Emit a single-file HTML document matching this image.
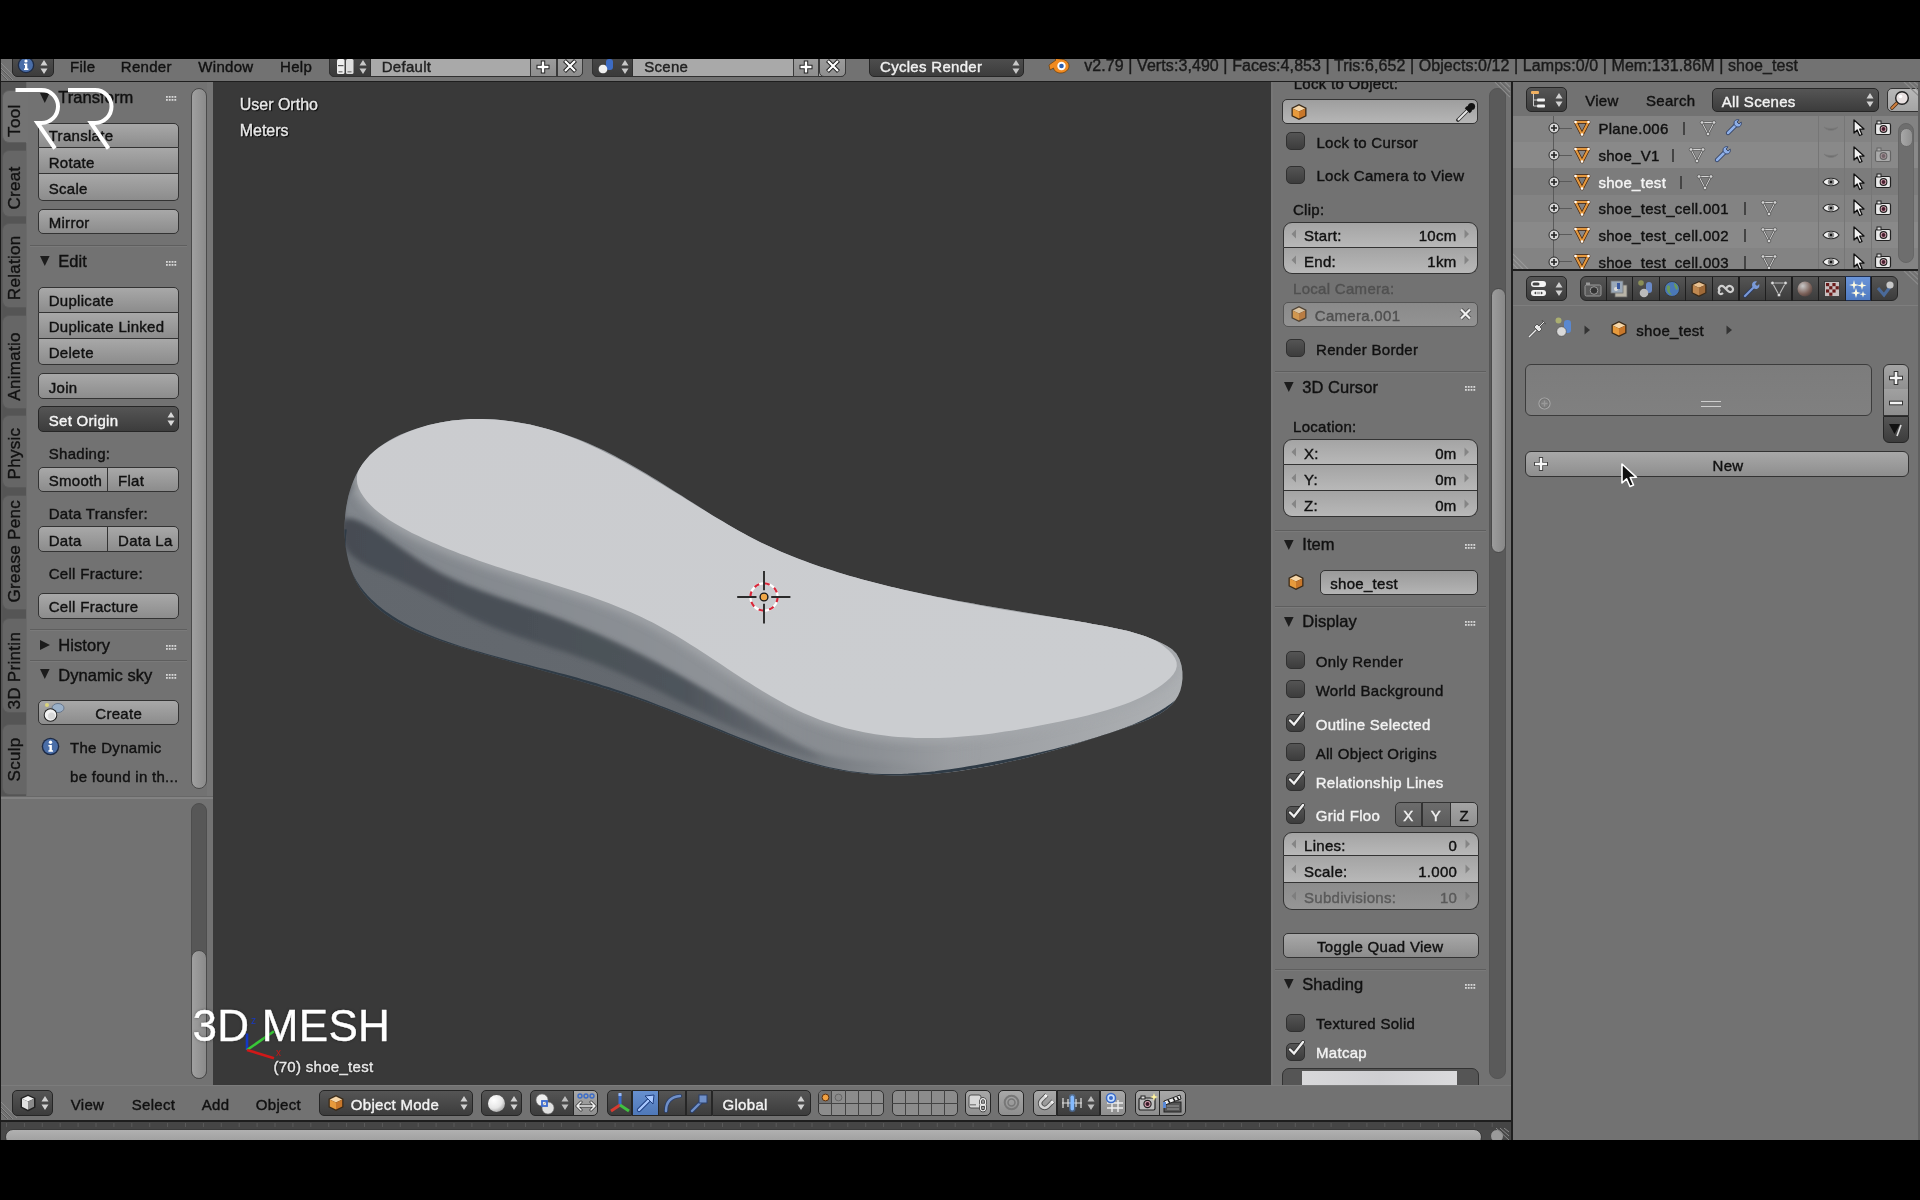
<!DOCTYPE html><html><head><meta charset="utf-8"><style>
html,body{margin:0;padding:0;background:#000;width:1920px;height:1200px;overflow:hidden}
body{position:relative;font-family:"Liberation Sans",sans-serif}
.a{position:absolute;box-sizing:border-box}
.t{position:absolute;white-space:nowrap;font-family:"Liberation Sans",sans-serif;-webkit-text-stroke:0.4px currentColor;letter-spacing:0.3px}
.btn{border:1px solid #333;border-radius:5px;background:linear-gradient(#a8a8a8,#8c8c8c)}
.btnf{border:1px solid #333;background:linear-gradient(#a8a8a8,#8c8c8c)}
.num{border:1px solid #333;background:linear-gradient(#a4a4a4,#b8b8b8)}
.chk{width:19px;height:19px;border:1px solid #303030;border-radius:5px;background:linear-gradient(#545454,#3c3c3c)}
.menu{border:1px solid #262626;border-radius:5px;background:linear-gradient(#555,#3c3c3c)}
.tf{border:1px solid #333;border-radius:5px;background:linear-gradient(#9a9a9a,#b4b4b4)}
.sep{background:#5c5c5c}
</style></head><body><div id="root" style="position:absolute;left:0;top:0;width:1920px;height:1200px;will-change:transform"><div class="a " style="left:0px;top:59px;width:1920px;height:22px;background:#727272"></div>
<div class="a " style="left:0px;top:80.5px;width:1920px;height:1.5px;background:#1e1e1e"></div>
<div class="a " style="left:0px;top:59px;width:1px;height:1081px;background:#1a1a1a"></div>
<div class="a " style="left:213px;top:82px;width:1058px;height:1003px;background:#393939"></div>
<div class="a " style="left:1px;top:82px;width:25px;height:715px;background:#555555"></div>
<div class="a " style="left:26px;top:82px;width:187px;height:715px;background:#727272"></div>
<div class="a " style="left:207px;top:82px;width:6px;height:1003px;background:#767676"></div>
<div class="a " style="left:1px;top:797px;width:212px;height:288px;background:#727272"></div>
<div class="a " style="left:1px;top:796px;width:212px;height:1px;background:#686868"></div>
<div class="a " style="left:1px;top:797px;width:212px;height:1.5px;background:#828282"></div>
<div class="a " style="left:1271px;top:82px;width:240px;height:1003px;background:#727272"></div>
<div class="a " style="left:1271px;top:82px;width:2px;height:1003px;background:#767676"></div>
<div class="a " style="left:1px;top:1085px;width:1510px;height:35px;background:#727272"></div>
<div class="a " style="left:1px;top:1084.5px;width:1510px;height:1px;background:#7c7c7c"></div>
<div class="a " style="left:1px;top:1120px;width:1510px;height:2px;background:#1e1e1e"></div>
<div class="a " style="left:1px;top:1122px;width:1510px;height:18px;background:#484848"></div>
<div class="a " style="left:1511px;top:81px;width:2px;height:1059px;background:#1e1e1e"></div>
<div class="a " style="left:1513px;top:82px;width:407px;height:34.5px;background:#727272"></div>
<div class="a " style="left:1513px;top:116.5px;width:407px;height:152.5px;background:#858585"></div>
<div class="a " style="left:1513px;top:269px;width:407px;height:2px;background:#1e1e1e"></div>
<div class="a " style="left:1513px;top:271px;width:407px;height:34px;background:#727272"></div>
<div class="a " style="left:1513px;top:305px;width:407px;height:835px;background:#727272"></div>
<div class="a " style="left:1513px;top:304.5px;width:407px;height:1.5px;background:#7e7e7e"></div>
<svg class="a" style="left:1px;top:59px;" width="14" height="22" viewBox="0 0 14 22"><path d="M0 9 L12 21 M0 14 L7 21 M0 4 L16 20" stroke="#8a8a8a" stroke-width="1"/><path d="M0 10 L11 21 M0 15 L6 21" stroke="#555" stroke-width="0.8"/></svg>
<div class="a menu" style="left:12px;top:50px;width:41.5px;height:26.5px;border-radius:0 0 5px 5px"></div>
<svg class="a" style="left:17px;top:56px;" width="18" height="18" viewBox="0 0 18 18"><g transform="scale(1.000)"><circle cx="9" cy="9" r="8.3" fill="#1d2a44"/><circle cx="9" cy="9" r="7" fill="#4a6ea8"/><circle cx="9" cy="5" r="1.6" fill="#fff"/><path d="M7 7.5 L10.3 7.5 L10.3 12.6 L11.4 12.6 L11.4 14 L7 14 L7 12.6 L8 12.6 L8 8.9 L7 8.9Z" fill="#fff"/></g></svg>
<svg class="a" style="left:40px;top:59px;" width="9" height="16" viewBox="0 0 9 16"><path d="M4 1 L7.5 6.5 L0.5 6.5Z M0.5 9.5 L7.5 9.5 L4 15Z" fill="#d0d0d0"/></svg>
<div class="t" style="left:70px;top:58.80px;font-size:15px;line-height:15px;color:#111;">File</div>
<div class="t" style="left:120.8px;top:58.80px;font-size:15px;line-height:15px;color:#111;">Render</div>
<div class="t" style="left:198.3px;top:58.80px;font-size:15px;line-height:15px;color:#111;">Window</div>
<div class="t" style="left:280px;top:58.80px;font-size:15px;line-height:15px;color:#111;">Help</div>
<div class="a " style="left:329.4px;top:50px;width:254px;height:26.6px;border-radius:0 0 5px 5px;overflow:hidden;background:#a9a9a9;border:1px solid #303030"></div>
<div class="a " style="left:329.4px;top:50px;width:41.5px;height:26.6px;border-radius:0 0 0 5px;background:linear-gradient(#4a4a4a,#3a3a3a);border:1px solid #303030"></div>
<div class="a " style="left:530px;top:50px;width:26.7px;height:26.6px;background:linear-gradient(#a2a2a2,#8e8e8e);border:1px solid #3a3a3a"></div>
<div class="a " style="left:556.7px;top:50px;width:26.6px;height:26.6px;border-radius:0 0 5px 0;background:linear-gradient(#a2a2a2,#8e8e8e);border:1px solid #3a3a3a"></div>
<svg class="a" style="left:336px;top:59px;" width="20" height="17" viewBox="0 0 20 17"><rect x="1" y="0" width="7.5" height="15" rx="1.5" fill="#eee"/><rect x="10" y="0" width="7.5" height="15" rx="1.5" fill="#ddd"/><rect x="2" y="6" width="5.5" height="1.2" fill="#555"/><rect x="2.5" y="12" width="4" height="1.5" fill="#888"/><rect x="11.5" y="12" width="4" height="1.5" fill="#888"/></svg>
<svg class="a" style="left:359px;top:59px;" width="9" height="16" viewBox="0 0 9 16"><path d="M4 1 L7.5 6.5 L0.5 6.5Z M0.5 9.5 L7.5 9.5 L4 15Z" fill="#c8c8c8"/></svg>
<div class="t" style="left:381.7px;top:58.60px;font-size:15px;line-height:15px;color:#222;">Default</div>
<svg class="a" style="left:535px;top:59px;" width="16" height="16" viewBox="0 0 16 16"><path d="M8 1.5 L8 14.5 M1.5 8 L14.5 8" stroke="#222" stroke-width="4.4"/><path d="M8 2.5 L8 13.5 M2.5 8 L13.5 8" stroke="#fff" stroke-width="2.4"/></svg>
<svg class="a" style="left:562px;top:59px;" width="16" height="14" viewBox="0 0 16 14"><path d="M2.5 1.5 L13.5 12.5 M13.5 1.5 L2.5 12.5" stroke="#222" stroke-width="4.2"/><path d="M3 2 L13 12 M13 2 L3 12" stroke="#fff" stroke-width="2.2"/></svg>
<div class="a " style="left:591.7px;top:50px;width:254.1px;height:26.6px;border-radius:0 0 5px 5px;overflow:hidden;background:#a9a9a9;border:1px solid #303030"></div>
<div class="a " style="left:591.7px;top:50px;width:41.6px;height:26.6px;border-radius:0 0 0 5px;background:linear-gradient(#4a4a4a,#3a3a3a);border:1px solid #303030"></div>
<div class="a " style="left:793.3px;top:50px;width:25.9px;height:26.6px;background:linear-gradient(#a2a2a2,#8e8e8e);border:1px solid #3a3a3a"></div>
<div class="a " style="left:819.2px;top:50px;width:26.6px;height:26.6px;border-radius:0 0 5px 5px;background:linear-gradient(#a2a2a2,#8e8e8e);border:1px solid #3a3a3a"></div>
<svg class="a" style="left:597px;top:57px;" width="22" height="18" viewBox="0 0 22 18"><circle cx="6" cy="12" r="4.6" fill="#eaeaea" stroke="#333" stroke-width="0.8"/><rect x="9" y="2" width="7" height="11" rx="3" fill="#3d6cc4"/><circle cx="6" cy="12" r="4.3" fill="#f0f0f0"/></svg>
<svg class="a" style="left:621px;top:59px;" width="9" height="16" viewBox="0 0 9 16"><path d="M4 1 L7.5 6.5 L0.5 6.5Z M0.5 9.5 L7.5 9.5 L4 15Z" fill="#c8c8c8"/></svg>
<div class="t" style="left:644.2px;top:58.60px;font-size:15px;line-height:15px;color:#222;">Scene</div>
<svg class="a" style="left:798px;top:59px;" width="16" height="16" viewBox="0 0 16 16"><path d="M8 1.5 L8 14.5 M1.5 8 L14.5 8" stroke="#222" stroke-width="4.4"/><path d="M8 2.5 L8 13.5 M2.5 8 L13.5 8" stroke="#fff" stroke-width="2.4"/></svg>
<svg class="a" style="left:825px;top:59px;" width="16" height="14" viewBox="0 0 16 14"><path d="M2.5 1.5 L13.5 12.5 M13.5 1.5 L2.5 12.5" stroke="#222" stroke-width="4.2"/><path d="M3 2 L13 12 M13 2 L3 12" stroke="#fff" stroke-width="2.2"/></svg>
<div class="a menu" style="left:869.2px;top:50px;width:155px;height:26.6px;border-radius:0 0 5px 5px"></div>
<div class="t" style="left:880px;top:58.80px;font-size:15px;line-height:15px;color:#f0f0f0;">Cycles Render</div>
<svg class="a" style="left:1012px;top:59px;" width="9" height="16" viewBox="0 0 9 16"><path d="M4 1 L7.5 6.5 L0.5 6.5Z M0.5 9.5 L7.5 9.5 L4 15Z" fill="#c8c8c8"/></svg>
<svg class="a" style="left:1048px;top:56px;" width="23" height="18" viewBox="0 0 23 18"><path d="M1 9 L8 4 L6 2 L12 3 C17 3 21 6 21 10 C21 14 17 17 13 17 C9 17 6 15 5.5 12 L2 14 Z" fill="#f08a20" stroke="#5a3000" stroke-width="0.6"/><circle cx="13.5" cy="10" r="4.2" fill="#fff"/><circle cx="13.5" cy="10" r="2.3" fill="#2c5fb0"/></svg>
<div class="t" style="left:1084.2px;top:58.06px;font-size:16px;line-height:16px;color:#1a1a1a;letter-spacing:0.08px">v2.79 | Verts:3,490 | Faces:4,853 | Tris:6,652 | Objects:0/12 | Lamps:0/0 | Mem:131.86M | shoe_test</div>
<div class="a " style="left:1.5px;top:90.1px;width:26px;height:53.20000000000002px;background:#737373;border-radius:7px 0 0 7px;border:1px solid #5e5e5e;border-right:none"></div>
<svg class="a" style="left:1px;top:90.1px;" width="26" height="53.20000000000002" viewBox="0 0 26 53.20000000000002"><text transform="translate(19.4,46.9) rotate(-90)" font-family="Liberation Sans" font-size="17" letter-spacing="0.3" fill="#111" stroke="#111" stroke-width="0.35">Tool</text></svg>
<div class="a " style="left:1.5px;top:150px;width:24px;height:67px;background:#666666;border-radius:7px 0 0 7px;border:1px solid #5a5a5a;border-right:none"></div>
<svg class="a" style="left:1px;top:150px;" width="26" height="67" viewBox="0 0 26 67"><text transform="translate(19.4,59.5) rotate(-90)" font-family="Liberation Sans" font-size="17" letter-spacing="0.3" fill="#111" stroke="#111" stroke-width="0.35">Creat</text></svg>
<div class="a " style="left:1.5px;top:223.3px;width:24px;height:85.0px;background:#666666;border-radius:7px 0 0 7px;border:1px solid #5a5a5a;border-right:none"></div>
<svg class="a" style="left:1px;top:223.3px;" width="26" height="85.0" viewBox="0 0 26 85.0"><text transform="translate(19.4,77.2) rotate(-90)" font-family="Liberation Sans" font-size="17" letter-spacing="0.3" fill="#111" stroke="#111" stroke-width="0.35">Relation</text></svg>
<div class="a " style="left:1.5px;top:314.8px;width:24px;height:94.19999999999999px;background:#666666;border-radius:7px 0 0 7px;border:1px solid #5a5a5a;border-right:none"></div>
<svg class="a" style="left:1px;top:314.8px;" width="26" height="94.19999999999999" viewBox="0 0 26 94.19999999999999"><text transform="translate(19.4,85.7) rotate(-90)" font-family="Liberation Sans" font-size="17" letter-spacing="0.3" fill="#111" stroke="#111" stroke-width="0.35">Animatio</text></svg>
<div class="a " style="left:1.5px;top:415px;width:24px;height:73px;background:#666666;border-radius:7px 0 0 7px;border:1px solid #5a5a5a;border-right:none"></div>
<svg class="a" style="left:1px;top:415px;" width="26" height="73" viewBox="0 0 26 73"><text transform="translate(19.4,64.5) rotate(-90)" font-family="Liberation Sans" font-size="17" letter-spacing="0.3" fill="#111" stroke="#111" stroke-width="0.35">Physic</text></svg>
<div class="a " style="left:1.5px;top:495px;width:24px;height:115px;background:#666666;border-radius:7px 0 0 7px;border:1px solid #5a5a5a;border-right:none"></div>
<svg class="a" style="left:1px;top:495px;" width="26" height="115" viewBox="0 0 26 115"><text transform="translate(19.4,107.5) rotate(-90)" font-family="Liberation Sans" font-size="17" letter-spacing="0.3" fill="#111" stroke="#111" stroke-width="0.35">Grease Penc</text></svg>
<div class="a " style="left:1.5px;top:618px;width:24px;height:95px;background:#666666;border-radius:7px 0 0 7px;border:1px solid #5a5a5a;border-right:none"></div>
<svg class="a" style="left:1px;top:618px;" width="26" height="95" viewBox="0 0 26 95"><text transform="translate(19.4,91.5) rotate(-90)" font-family="Liberation Sans" font-size="17" letter-spacing="0.3" fill="#111" stroke="#111" stroke-width="0.35">3D Printin</text></svg>
<div class="a " style="left:1.5px;top:724px;width:24px;height:71px;background:#666666;border-radius:7px 0 0 7px;border:1px solid #5a5a5a;border-right:none"></div>
<svg class="a" style="left:1px;top:724px;" width="26" height="71" viewBox="0 0 26 71"><text transform="translate(19.4,57.5) rotate(-90)" font-family="Liberation Sans" font-size="17" letter-spacing="0.3" fill="#111" stroke="#111" stroke-width="0.35">Sculp</text></svg>
<div class="a " style="left:25.5px;top:82px;width:1.5px;height:715px;background:#6a6a6a"></div>
<div class="a " style="left:25.5px;top:90.1px;width:2px;height:53.2px;background:#737373"></div>
<div class="a " style="left:190.7px;top:88px;width:16px;height:701.3px;border-radius:8px;border:1px solid #4a4a4a;background:linear-gradient(90deg,#a0a0a0,#8a8a8a)"></div>
<svg class="a" style="left:40.2px;top:92.8px;" width="10" height="10" viewBox="0 0 10 10"><path d="M0 0 L9.6 0 L4.8 10Z" fill="#1c1c1c"/></svg>
<div class="t" style="left:58.3px;top:88.73px;font-size:16.5px;line-height:16.5px;color:#111;letter-spacing:0.05px">Transform</div>
<svg class="a" style="left:166px;top:96.4px;" width="11" height="5" viewBox="0 0 11 5"><rect x="0.0" y="0" width="1.8" height="1.8" fill="#d8d8d8"/><rect x="2.8" y="0" width="1.8" height="1.8" fill="#d8d8d8"/><rect x="5.6" y="0" width="1.8" height="1.8" fill="#d8d8d8"/><rect x="8.399999999999999" y="0" width="1.8" height="1.8" fill="#d8d8d8"/><rect x="0.0" y="3" width="1.8" height="1.8" fill="#d8d8d8"/><rect x="2.8" y="3" width="1.8" height="1.8" fill="#d8d8d8"/><rect x="5.6" y="3" width="1.8" height="1.8" fill="#d8d8d8"/><rect x="8.399999999999999" y="3" width="1.8" height="1.8" fill="#d8d8d8"/></svg>
<div class="a btn" style="left:38px;top:122.7px;width:141px;height:25.299999999999997px;border-radius:5px 5px 0 0;"></div>
<div class="t" style="left:48.7px;top:128.00px;font-size:15px;line-height:15px;color:#111;">Translate</div>
<div class="a btn" style="left:38px;top:148px;width:141px;height:26.400000000000006px;border-radius:0;border-top:none;"></div>
<div class="t" style="left:48.7px;top:154.60px;font-size:15px;line-height:15px;color:#111;">Rotate</div>
<div class="a btn" style="left:38px;top:174.4px;width:141px;height:26.599999999999994px;border-radius:0 0 5px 5px;border-top:none;"></div>
<div class="t" style="left:48.7px;top:181.30px;font-size:15px;line-height:15px;color:#111;">Scale</div>
<div class="a btn" style="left:38px;top:209.3px;width:141px;height:24.69999999999999px;border-radius:5px;"></div>
<div class="t" style="left:48.7px;top:214.60px;font-size:15px;line-height:15px;color:#111;">Mirror</div>
<div class="a " style="left:30px;top:245.1px;width:157px;height:1px;background:#5e5e5e"></div>
<div class="a " style="left:30px;top:246.1px;width:157px;height:1px;background:#7a7a7a"></div>
<svg class="a" style="left:40.2px;top:255.5px;" width="10" height="10" viewBox="0 0 10 10"><path d="M0 0 L9.6 0 L4.8 10Z" fill="#1c1c1c"/></svg>
<div class="t" style="left:58.3px;top:253.03px;font-size:16.5px;line-height:16.5px;color:#111;letter-spacing:0.05px">Edit</div>
<svg class="a" style="left:166px;top:260.7px;" width="11" height="5" viewBox="0 0 11 5"><rect x="0.0" y="0" width="1.8" height="1.8" fill="#d8d8d8"/><rect x="2.8" y="0" width="1.8" height="1.8" fill="#d8d8d8"/><rect x="5.6" y="0" width="1.8" height="1.8" fill="#d8d8d8"/><rect x="8.399999999999999" y="0" width="1.8" height="1.8" fill="#d8d8d8"/><rect x="0.0" y="3" width="1.8" height="1.8" fill="#d8d8d8"/><rect x="2.8" y="3" width="1.8" height="1.8" fill="#d8d8d8"/><rect x="5.6" y="3" width="1.8" height="1.8" fill="#d8d8d8"/><rect x="8.399999999999999" y="3" width="1.8" height="1.8" fill="#d8d8d8"/></svg>
<div class="a btn" style="left:38px;top:287px;width:141px;height:26px;border-radius:5px 5px 0 0;"></div>
<div class="t" style="left:48.7px;top:292.60px;font-size:15px;line-height:15px;color:#111;">Duplicate</div>
<div class="a btn" style="left:38px;top:313px;width:141px;height:26px;border-radius:0;border-top:none;"></div>
<div class="t" style="left:48.7px;top:318.60px;font-size:15px;line-height:15px;color:#111;">Duplicate Linked</div>
<div class="a btn" style="left:38px;top:339px;width:141px;height:26.30000000000001px;border-radius:0 0 5px 5px;border-top:none;"></div>
<div class="t" style="left:48.7px;top:345.30px;font-size:15px;line-height:15px;color:#111;">Delete</div>
<div class="a btn" style="left:38px;top:373.3px;width:141px;height:25.399999999999977px;border-radius:5px;"></div>
<div class="t" style="left:48.7px;top:380.00px;font-size:15px;line-height:15px;color:#111;">Join</div>
<div class="a menu" style="left:38px;top:406px;width:141px;height:26px;"></div>
<div class="t" style="left:48.7px;top:413.30px;font-size:15px;line-height:15px;color:#f4f4f4;">Set Origin</div>
<svg class="a" style="left:166.5px;top:410.5px;" width="8" height="16" viewBox="0 0 8 16"><path d="M4 1 L7.5 6.5 L0.5 6.5Z M0.5 9.5 L7.5 9.5 L4 15Z" fill="#d8d8d8"/></svg>
<div class="t" style="left:48.7px;top:446.00px;font-size:15px;line-height:15px;color:#111;">Shading:</div>
<div class="a btn" style="left:38px;top:466.7px;width:70px;height:25.3px;border-radius:5px 0 0 5px"></div>
<div class="a btn" style="left:107.3px;top:466.7px;width:71.7px;height:25.3px;border-radius:0 5px 5px 0"></div>
<div class="t" style="left:48.7px;top:472.60px;font-size:15px;line-height:15px;color:#111;">Smooth</div>
<div class="t" style="left:118px;top:472.60px;font-size:15px;line-height:15px;color:#111;">Flat</div>
<div class="t" style="left:48.7px;top:506.00px;font-size:15px;line-height:15px;color:#111;">Data Transfer:</div>
<div class="a btn" style="left:38px;top:526.4px;width:70px;height:25.6px;border-radius:5px 0 0 5px"></div>
<div class="a btn" style="left:107.3px;top:526.4px;width:71.7px;height:25.6px;border-radius:0 5px 5px 0"></div>
<div class="t" style="left:48.7px;top:532.60px;font-size:15px;line-height:15px;color:#111;">Data</div>
<div class="t" style="left:118px;top:532.60px;font-size:15px;line-height:15px;color:#111;">Data La</div>
<div class="t" style="left:48.7px;top:566.00px;font-size:15px;line-height:15px;color:#111;">Cell Fracture:</div>
<div class="a btn" style="left:38px;top:593.3px;width:141px;height:25.40000000000009px;border-radius:5px;"></div>
<div class="t" style="left:48.7px;top:599.30px;font-size:15px;line-height:15px;color:#111;">Cell Fracture</div>
<div class="a " style="left:30px;top:629.1px;width:157px;height:1px;background:#5e5e5e"></div>
<div class="a " style="left:30px;top:630.1px;width:157px;height:1px;background:#7a7a7a"></div>
<svg class="a" style="left:39.5px;top:640px;" width="10" height="10" viewBox="0 0 10 10"><path d="M0 0 L10 5 L0 10Z" fill="#1c1c1c"/></svg>
<div class="t" style="left:58.3px;top:637.33px;font-size:16.5px;line-height:16.5px;color:#111;letter-spacing:0.05px">History</div>
<svg class="a" style="left:166px;top:645px;" width="11" height="5" viewBox="0 0 11 5"><rect x="0.0" y="0" width="1.8" height="1.8" fill="#d8d8d8"/><rect x="2.8" y="0" width="1.8" height="1.8" fill="#d8d8d8"/><rect x="5.6" y="0" width="1.8" height="1.8" fill="#d8d8d8"/><rect x="8.399999999999999" y="0" width="1.8" height="1.8" fill="#d8d8d8"/><rect x="0.0" y="3" width="1.8" height="1.8" fill="#d8d8d8"/><rect x="2.8" y="3" width="1.8" height="1.8" fill="#d8d8d8"/><rect x="5.6" y="3" width="1.8" height="1.8" fill="#d8d8d8"/><rect x="8.399999999999999" y="3" width="1.8" height="1.8" fill="#d8d8d8"/></svg>
<div class="a " style="left:30px;top:659.5px;width:157px;height:1px;background:#5e5e5e"></div>
<div class="a " style="left:30px;top:660.5px;width:157px;height:1px;background:#7a7a7a"></div>
<svg class="a" style="left:40.2px;top:669.0px;" width="10" height="10" viewBox="0 0 10 10"><path d="M0 0 L9.6 0 L4.8 10Z" fill="#1c1c1c"/></svg>
<div class="t" style="left:58.3px;top:666.73px;font-size:16.5px;line-height:16.5px;color:#111;letter-spacing:0.05px">Dynamic sky</div>
<svg class="a" style="left:166px;top:673.5px;" width="11" height="5" viewBox="0 0 11 5"><rect x="0.0" y="0" width="1.8" height="1.8" fill="#d8d8d8"/><rect x="2.8" y="0" width="1.8" height="1.8" fill="#d8d8d8"/><rect x="5.6" y="0" width="1.8" height="1.8" fill="#d8d8d8"/><rect x="8.399999999999999" y="0" width="1.8" height="1.8" fill="#d8d8d8"/><rect x="0.0" y="3" width="1.8" height="1.8" fill="#d8d8d8"/><rect x="2.8" y="3" width="1.8" height="1.8" fill="#d8d8d8"/><rect x="5.6" y="3" width="1.8" height="1.8" fill="#d8d8d8"/><rect x="8.399999999999999" y="3" width="1.8" height="1.8" fill="#d8d8d8"/></svg>
<div class="a btn" style="left:38px;top:699.6px;width:141px;height:25.7px;"></div>
<div class="t" style="left:95.3px;top:706.00px;font-size:15px;line-height:15px;color:#111;">Create</div>
<svg class="a" style="left:42px;top:701px;" width="24" height="22" viewBox="0 0 24 22"><ellipse cx="16" cy="7" rx="6" ry="4.5" fill="#9ab0c8" stroke="#5a6a80" stroke-width="0.8"/><circle cx="5" cy="4" r="2" fill="#e8e070" opacity="0.8"/><circle cx="8.5" cy="14" r="6.8" fill="#222"/><circle cx="8.5" cy="14" r="5.8" fill="#f2f2f2"/><circle cx="9.5" cy="15" r="3.5" fill="#d8d8d8"/></svg>
<svg class="a" style="left:41.3px;top:736.7px;" width="19" height="19" viewBox="0 0 19 19"><g transform="scale(1.056)"><circle cx="9" cy="9" r="8.3" fill="#1d2a44"/><circle cx="9" cy="9" r="7" fill="#4a6ea8"/><circle cx="9" cy="5" r="1.6" fill="#fff"/><path d="M7 7.5 L10.3 7.5 L10.3 12.6 L11.4 12.6 L11.4 14 L7 14 L7 12.6 L8 12.6 L8 8.9 L7 8.9Z" fill="#fff"/></g></svg>
<div class="t" style="left:70px;top:740.00px;font-size:15px;line-height:15px;color:#111;">The Dynamic</div>
<div class="t" style="left:70px;top:768.60px;font-size:15px;line-height:15px;color:#111;">be found in th...</div>
<div class="a " style="left:190.9px;top:803px;width:16px;height:276.4px;border-radius:8px;background:#575757;border:1px solid #4e4e4e"></div>
<div class="a " style="left:190.9px;top:950px;width:16px;height:129.4px;border-radius:8px;border:1px solid #4a4a4a;background:linear-gradient(90deg,#a0a0a0,#8a8a8a)"></div>
<svg class="a" style="left:213px;top:82px;" width="1058" height="1003" viewBox="0 0 1058 1003">
<defs>
<linearGradient id="gs" x1="0" y1="0" x2="0.3" y2="1"><stop offset="0" stop-color="#cbcccf"/><stop offset="1" stop-color="#cbcdd0"/></linearGradient>
<linearGradient id="gside" x1="340" y1="0" x2="1190" y2="0" gradientUnits="userSpaceOnUse"><stop offset="0" stop-color="#62676d"/><stop offset="0.4" stop-color="#64696f"/><stop offset="0.55" stop-color="#72777d"/><stop offset="0.72" stop-color="#9a9da1"/><stop offset="1" stop-color="#aeb1b4"/></linearGradient>
<linearGradient id="gband" x1="340" y1="0" x2="830" y2="0" gradientUnits="userSpaceOnUse"><stop offset="0" stop-color="#464c53"/><stop offset="0.7" stop-color="#4e545b"/><stop offset="1" stop-color="#5e636a" stop-opacity="0.3"/></linearGradient>
<linearGradient id="grim" x1="340" y1="0" x2="980" y2="0" gradientUnits="userSpaceOnUse"><stop offset="0" stop-color="#80858b"/><stop offset="0.6" stop-color="#8e9297"/><stop offset="1" stop-color="#9ea1a5" stop-opacity="0"/></linearGradient>
<filter id="bl" x="-5%" y="-5%" width="110%" height="110%"><feGaussianBlur stdDeviation="4"/></filter>
<filter id="bl2" x="-5%" y="-10%" width="110%" height="120%"><feGaussianBlur stdDeviation="2.5"/></filter>
<clipPath id="csil"><path d="M345.3,514.7 L346.0,508.6 L347.1,502.5 L348.3,496.5 L349.9,490.7 L351.8,484.9 L354.0,479.4 L356.5,474.0 L359.3,468.9 L362.5,464.0 L366.1,459.4 L370.0,455.1 L374.3,451.1 L378.9,447.3 L383.7,443.9 L388.8,440.7 L394.2,437.8 L399.7,435.1 L405.3,432.7 L411.1,430.4 L416.9,428.4 L422.8,426.7 L428.6,425.1 L434.6,423.7 L440.5,422.5 L446.4,421.4 L452.4,420.6 L458.4,419.9 L464.3,419.4 L470.3,419.1 L476.3,419.0 L482.3,419.0 L488.3,419.2 L494.3,419.5 L500.2,420.0 L506.2,420.7 L512.2,421.4 L518.1,422.4 L524.0,423.4 L529.9,424.6 L535.8,425.9 L541.7,427.4 L547.5,429.0 L553.4,430.7 L559.1,432.5 L564.9,434.4 L570.6,436.4 L576.3,438.6 L582.0,440.8 L587.6,443.1 L593.1,445.5 L598.6,448.0 L604.1,450.6 L609.5,453.3 L614.9,456.0 L620.2,458.9 L625.5,461.7 L630.8,464.7 L636.0,467.7 L641.2,470.7 L646.4,473.8 L651.6,476.9 L656.7,480.1 L661.8,483.2 L666.9,486.5 L672.0,489.7 L677.1,492.9 L682.2,496.1 L687.3,499.4 L692.3,502.6 L697.4,505.8 L702.5,509.0 L707.6,512.2 L712.7,515.4 L717.8,518.5 L723.0,521.6 L728.2,524.7 L733.4,527.7 L738.6,530.7 L743.8,533.6 L749.1,536.4 L754.5,539.2 L759.8,541.9 L765.2,544.5 L770.7,547.0 L776.2,549.5 L781.7,551.9 L787.3,554.2 L792.9,556.5 L798.5,558.7 L804.1,560.8 L809.8,562.9 L815.5,564.9 L821.2,566.9 L826.9,568.8 L832.7,570.6 L838.4,572.4 L844.2,574.2 L850.0,575.9 L855.8,577.5 L861.6,579.2 L867.4,580.7 L873.2,582.3 L879.0,583.8 L884.9,585.2 L890.7,586.7 L896.5,588.0 L902.4,589.4 L908.3,590.7 L914.1,592.0 L920.0,593.3 L925.9,594.5 L931.8,595.7 L937.7,596.9 L943.6,598.1 L949.5,599.2 L955.4,600.4 L961.3,601.5 L967.2,602.5 L973.2,603.6 L979.1,604.7 L985.0,605.7 L991.0,606.8 L996.9,607.8 L1002.9,608.8 L1008.8,609.8 L1014.8,610.8 L1020.7,611.8 L1026.7,612.8 L1032.6,613.8 L1038.6,614.8 L1044.6,615.8 L1050.6,616.7 L1056.5,617.7 L1062.5,618.7 L1068.5,619.8 L1074.5,620.8 L1080.4,621.8 L1086.4,622.8 L1092.4,623.9 L1098.4,625.0 L1104.3,626.1 L1110.3,627.2 L1116.2,628.4 L1122.1,629.7 L1128.0,631.1 L1133.8,632.7 L1139.6,634.4 L1145.2,636.3 L1150.8,638.4 L1156.3,640.7 L1161.7,643.2 L1167.0,646.0 L1172.0,649.3 L1176.3,653.5 L1179.4,658.9 L1181.4,665.2 L1182.4,672.0 L1182.5,678.8 L1181.7,685.1 L1180.3,690.7 L1178.1,695.8 L1175.3,700.3 L1172.0,704.4 L1168.1,708.0 L1163.8,711.3 L1159.1,714.2 L1154.0,716.8 L1148.7,719.2 L1143.2,721.5 L1137.5,723.5 L1131.8,725.6 L1126.0,727.5 L1120.1,729.5 L1114.3,731.5 L1108.4,733.4 L1102.6,735.3 L1096.7,737.2 L1090.8,739.1 L1084.9,741.0 L1079.0,742.8 L1073.1,744.7 L1067.2,746.4 L1061.3,748.2 L1055.3,749.9 L1049.4,751.6 L1043.4,753.2 L1037.5,754.8 L1031.5,756.4 L1025.5,757.9 L1019.6,759.4 L1013.6,760.8 L1007.6,762.1 L1001.7,763.5 L995.7,764.7 L989.7,765.9 L983.7,767.1 L977.7,768.1 L971.8,769.1 L965.8,770.1 L959.8,771.0 L953.8,771.8 L947.8,772.5 L941.9,773.1 L935.9,773.7 L929.9,774.2 L924.0,774.6 L918.0,774.9 L912.0,775.2 L906.1,775.3 L900.2,775.4 L894.2,775.4 L888.3,775.2 L882.4,775.0 L876.5,774.7 L870.6,774.3 L864.7,773.7 L858.8,773.1 L852.9,772.4 L847.0,771.5 L841.2,770.5 L835.4,769.5 L829.5,768.3 L823.7,767.0 L817.9,765.6 L812.1,764.1 L806.3,762.5 L800.6,760.8 L794.8,759.1 L789.0,757.2 L783.3,755.3 L777.6,753.4 L771.8,751.4 L766.1,749.3 L760.4,747.2 L754.7,745.0 L749.0,742.8 L743.3,740.6 L737.6,738.3 L732.0,736.0 L726.3,733.7 L720.6,731.4 L715.0,729.1 L709.3,726.8 L703.7,724.4 L698.0,722.1 L692.4,719.8 L686.8,717.5 L681.1,715.3 L675.5,713.0 L669.9,710.9 L664.3,708.7 L658.7,706.6 L653.1,704.5 L647.4,702.5 L641.8,700.5 L636.2,698.6 L630.6,696.7 L625.0,694.9 L619.4,693.0 L613.8,691.3 L608.1,689.5 L602.5,687.8 L596.9,686.1 L591.2,684.4 L585.6,682.7 L579.9,681.1 L574.2,679.4 L568.5,677.8 L562.8,676.2 L557.1,674.6 L551.4,673.0 L545.6,671.4 L539.9,669.8 L534.1,668.2 L528.3,666.6 L522.5,665.0 L516.7,663.4 L510.8,661.8 L505.0,660.1 L499.1,658.5 L493.2,656.8 L487.2,655.1 L481.2,653.4 L475.3,651.6 L469.2,649.8 L463.2,648.0 L457.1,646.1 L451.1,644.2 L445.0,642.2 L439.0,640.2 L433.1,638.0 L427.2,635.8 L421.4,633.5 L415.7,631.1 L410.1,628.5 L404.6,625.8 L399.3,623.0 L394.1,620.0 L389.2,616.8 L384.4,613.5 L379.8,610.0 L375.5,606.3 L371.4,602.4 L367.5,598.3 L364.0,594.0 L360.7,589.4 L357.7,584.6 L355.1,579.5 L352.8,574.3 L350.7,568.8 L349.0,563.2 L347.6,557.4 L346.4,551.5 L345.5,545.5 L345.0,539.4 L344.6,533.3 L344.6,527.1 L344.8,520.9 L345.3,514.7 Z"/></clipPath>
</defs>
<g transform="translate(-213,-82)">
<path d="M345.3,514.7 L346.0,508.6 L347.1,502.5 L348.3,496.5 L349.9,490.7 L351.8,484.9 L354.0,479.4 L356.5,474.0 L359.3,468.9 L362.5,464.0 L366.1,459.4 L370.0,455.1 L374.3,451.1 L378.9,447.3 L383.7,443.9 L388.8,440.7 L394.2,437.8 L399.7,435.1 L405.3,432.7 L411.1,430.4 L416.9,428.4 L422.8,426.7 L428.6,425.1 L434.6,423.7 L440.5,422.5 L446.4,421.4 L452.4,420.6 L458.4,419.9 L464.3,419.4 L470.3,419.1 L476.3,419.0 L482.3,419.0 L488.3,419.2 L494.3,419.5 L500.2,420.0 L506.2,420.7 L512.2,421.4 L518.1,422.4 L524.0,423.4 L529.9,424.6 L535.8,425.9 L541.7,427.4 L547.5,429.0 L553.4,430.7 L559.1,432.5 L564.9,434.4 L570.6,436.4 L576.3,438.6 L582.0,440.8 L587.6,443.1 L593.1,445.5 L598.6,448.0 L604.1,450.6 L609.5,453.3 L614.9,456.0 L620.2,458.9 L625.5,461.7 L630.8,464.7 L636.0,467.7 L641.2,470.7 L646.4,473.8 L651.6,476.9 L656.7,480.1 L661.8,483.2 L666.9,486.5 L672.0,489.7 L677.1,492.9 L682.2,496.1 L687.3,499.4 L692.3,502.6 L697.4,505.8 L702.5,509.0 L707.6,512.2 L712.7,515.4 L717.8,518.5 L723.0,521.6 L728.2,524.7 L733.4,527.7 L738.6,530.7 L743.8,533.6 L749.1,536.4 L754.5,539.2 L759.8,541.9 L765.2,544.5 L770.7,547.0 L776.2,549.5 L781.7,551.9 L787.3,554.2 L792.9,556.5 L798.5,558.7 L804.1,560.8 L809.8,562.9 L815.5,564.9 L821.2,566.9 L826.9,568.8 L832.7,570.6 L838.4,572.4 L844.2,574.2 L850.0,575.9 L855.8,577.5 L861.6,579.2 L867.4,580.7 L873.2,582.3 L879.0,583.8 L884.9,585.2 L890.7,586.7 L896.5,588.0 L902.4,589.4 L908.3,590.7 L914.1,592.0 L920.0,593.3 L925.9,594.5 L931.8,595.7 L937.7,596.9 L943.6,598.1 L949.5,599.2 L955.4,600.4 L961.3,601.5 L967.2,602.5 L973.2,603.6 L979.1,604.7 L985.0,605.7 L991.0,606.8 L996.9,607.8 L1002.9,608.8 L1008.8,609.8 L1014.8,610.8 L1020.7,611.8 L1026.7,612.8 L1032.6,613.8 L1038.6,614.8 L1044.6,615.8 L1050.6,616.7 L1056.5,617.7 L1062.5,618.7 L1068.5,619.8 L1074.5,620.8 L1080.4,621.8 L1086.4,622.8 L1092.4,623.9 L1098.4,625.0 L1104.3,626.1 L1110.3,627.2 L1116.2,628.4 L1122.1,629.7 L1128.0,631.1 L1133.8,632.7 L1139.6,634.4 L1145.2,636.3 L1150.8,638.4 L1156.3,640.7 L1161.7,643.2 L1167.0,646.0 L1172.0,649.3 L1176.3,653.5 L1179.4,658.9 L1181.4,665.2 L1182.4,672.0 L1182.5,678.8 L1181.7,685.1 L1180.3,690.7 L1178.1,695.8 L1175.3,700.3 L1172.0,704.4 L1168.1,708.0 L1163.8,711.3 L1159.1,714.2 L1154.0,716.8 L1148.7,719.2 L1143.2,721.5 L1137.5,723.5 L1131.8,725.6 L1126.0,727.5 L1120.1,729.5 L1114.3,731.5 L1108.4,733.4 L1102.6,735.3 L1096.7,737.2 L1090.8,739.1 L1084.9,741.0 L1079.0,742.8 L1073.1,744.7 L1067.2,746.4 L1061.3,748.2 L1055.3,749.9 L1049.4,751.6 L1043.4,753.2 L1037.5,754.8 L1031.5,756.4 L1025.5,757.9 L1019.6,759.4 L1013.6,760.8 L1007.6,762.1 L1001.7,763.5 L995.7,764.7 L989.7,765.9 L983.7,767.1 L977.7,768.1 L971.8,769.1 L965.8,770.1 L959.8,771.0 L953.8,771.8 L947.8,772.5 L941.9,773.1 L935.9,773.7 L929.9,774.2 L924.0,774.6 L918.0,774.9 L912.0,775.2 L906.1,775.3 L900.2,775.4 L894.2,775.4 L888.3,775.2 L882.4,775.0 L876.5,774.7 L870.6,774.3 L864.7,773.7 L858.8,773.1 L852.9,772.4 L847.0,771.5 L841.2,770.5 L835.4,769.5 L829.5,768.3 L823.7,767.0 L817.9,765.6 L812.1,764.1 L806.3,762.5 L800.6,760.8 L794.8,759.1 L789.0,757.2 L783.3,755.3 L777.6,753.4 L771.8,751.4 L766.1,749.3 L760.4,747.2 L754.7,745.0 L749.0,742.8 L743.3,740.6 L737.6,738.3 L732.0,736.0 L726.3,733.7 L720.6,731.4 L715.0,729.1 L709.3,726.8 L703.7,724.4 L698.0,722.1 L692.4,719.8 L686.8,717.5 L681.1,715.3 L675.5,713.0 L669.9,710.9 L664.3,708.7 L658.7,706.6 L653.1,704.5 L647.4,702.5 L641.8,700.5 L636.2,698.6 L630.6,696.7 L625.0,694.9 L619.4,693.0 L613.8,691.3 L608.1,689.5 L602.5,687.8 L596.9,686.1 L591.2,684.4 L585.6,682.7 L579.9,681.1 L574.2,679.4 L568.5,677.8 L562.8,676.2 L557.1,674.6 L551.4,673.0 L545.6,671.4 L539.9,669.8 L534.1,668.2 L528.3,666.6 L522.5,665.0 L516.7,663.4 L510.8,661.8 L505.0,660.1 L499.1,658.5 L493.2,656.8 L487.2,655.1 L481.2,653.4 L475.3,651.6 L469.2,649.8 L463.2,648.0 L457.1,646.1 L451.1,644.2 L445.0,642.2 L439.0,640.2 L433.1,638.0 L427.2,635.8 L421.4,633.5 L415.7,631.1 L410.1,628.5 L404.6,625.8 L399.3,623.0 L394.1,620.0 L389.2,616.8 L384.4,613.5 L379.8,610.0 L375.5,606.3 L371.4,602.4 L367.5,598.3 L364.0,594.0 L360.7,589.4 L357.7,584.6 L355.1,579.5 L352.8,574.3 L350.7,568.8 L349.0,563.2 L347.6,557.4 L346.4,551.5 L345.5,545.5 L345.0,539.4 L344.6,533.3 L344.6,527.1 L344.8,520.9 L345.3,514.7 Z" fill="url(#gside)"/>
<g clip-path="url(#csil)">
<path d="M350.1,491.6 L352.7,489.5 L355.6,488.5 L359.0,488.4 L362.7,489.2 L366.8,490.7 L371.1,492.9 L375.7,495.7 L380.5,499.0 L385.5,502.6 L390.7,506.7 L396.0,510.9 L401.5,515.4 L407.0,519.8 L412.5,524.3 L418.1,528.7 L423.6,532.8 L429.1,536.7 L434.5,540.3 L439.8,543.4 L445.0,546.1 L450.2,548.4 L455.2,550.4 L460.2,552.2 L465.2,553.8 L470.1,555.2 L475.1,556.5 L480.0,557.8 L485.0,559.2 L490.0,560.5 L495.0,561.9 L500.1,563.3 L505.2,564.7 L510.3,566.2 L515.5,567.7 L520.6,569.3 L525.8,570.9 L531.0,572.5 L536.2,574.1 L541.5,575.8 L546.7,577.5 L551.9,579.3 L557.2,581.1 L562.5,582.9 L567.7,584.8 L573.0,586.7 L578.3,588.6 L583.6,590.6 L588.8,592.6 L594.1,594.7 L599.4,596.8 L604.6,598.9 L609.9,601.1 L615.1,603.3 L620.3,605.6 L625.5,607.9 L630.7,610.2 L635.9,612.6 L641.1,615.1 L646.2,617.5 L651.3,620.1 L656.4,622.6 L661.5,625.2 L666.5,627.9 L671.5,630.6 L676.5,633.3 L681.4,636.1 L686.4,638.9 L691.3,641.7 L696.2,644.6 L701.0,647.4 L705.9,650.3 L710.7,653.2 L715.5,656.1 L720.3,659.1 L725.1,662.0 L729.9,664.9 L734.7,667.9 L739.5,670.8 L744.2,673.7 L749.0,676.6 L753.7,679.5 L758.5,682.4 L763.2,685.2 L768.0,688.0 L772.7,690.8 L777.5,693.6 L782.2,696.3 L787.0,699.0 L791.7,701.7 L796.5,704.3 L801.3,706.9 L806.1,709.4 L810.9,711.8 L815.7,714.2 L820.5,716.5 L825.4,718.8 L830.2,721.0 L835.1,723.2 L840.0,725.2 L844.9,727.2 L849.9,729.1 L854.9,730.8 L860.0,732.5 L865.3,733.9 L870.6,735.2 L876.1,736.3 L881.8,737.1 L887.7,737.7 L893.8,738.0 L900.2,738.0 L906.8,737.7 L913.5,737.2 L920.4,736.5 L927.3,735.7 L934.2,734.9 L940.9,734.2 L947.4,733.6 L953.5,733.3 L959.3,733.2 L964.6,733.5 L969.3,734.2 L973.4,735.5 L976.7,737.3 L979.3,739.9 L981.0,743.1 L981.7,746.9 L981.6,750.9 L980.6,754.7 L978.7,758.0 L975.9,760.7 L972.4,762.8 L968.2,764.5 L963.4,765.6 L958.1,766.3 L952.3,766.7 L946.2,766.8 L939.7,766.6 L933.1,766.2 L926.3,765.7 L919.4,765.0 L912.5,764.3 L905.8,763.6 L899.2,763.0 L892.8,762.5 L886.6,762.0 L880.6,761.6 L874.8,761.2 L869.1,760.8 L863.5,760.4 L858.1,759.9 L852.7,759.3 L847.4,758.6 L842.2,757.8 L837.0,756.9 L831.8,755.8 L826.6,754.5 L821.4,753.1 L816.3,751.5 L811.2,749.8 L806.1,747.9 L801.0,746.0 L795.9,743.9 L790.9,741.7 L785.8,739.4 L780.8,736.9 L775.8,734.4 L770.8,731.8 L765.8,729.2 L760.9,726.4 L755.9,723.6 L750.9,720.7 L746.0,717.8 L741.1,714.9 L736.2,711.8 L731.3,708.8 L726.4,705.7 L721.5,702.7 L716.6,699.6 L711.7,696.5 L706.9,693.4 L702.0,690.3 L697.2,687.2 L692.4,684.1 L687.5,681.1 L682.7,678.1 L677.9,675.2 L673.1,672.3 L668.3,669.4 L663.5,666.7 L658.7,663.9 L653.9,661.3 L649.1,658.7 L644.3,656.2 L639.5,653.8 L634.7,651.4 L629.9,649.1 L625.1,646.8 L620.3,644.6 L615.5,642.4 L610.6,640.3 L605.8,638.3 L600.9,636.3 L596.1,634.3 L591.2,632.3 L586.3,630.4 L581.4,628.5 L576.4,626.7 L571.5,624.9 L566.5,623.1 L561.5,621.3 L556.4,619.6 L551.4,617.9 L546.3,616.1 L541.2,614.4 L536.0,612.8 L530.8,611.1 L525.6,609.4 L520.3,607.7 L515.0,606.0 L509.7,604.4 L504.3,602.7 L498.9,601.0 L493.5,599.3 L488.0,597.6 L482.4,595.8 L476.8,594.1 L471.2,592.3 L465.5,590.5 L459.7,588.7 L453.9,586.9 L448.0,585.0 L442.1,583.1 L436.2,581.1 L430.1,579.1 L424.0,577.1 L417.9,575.0 L411.8,572.9 L405.8,570.6 L399.9,568.3 L394.0,565.9 L388.4,563.3 L382.9,560.6 L377.6,557.8 L372.6,554.8 L367.9,551.6 L363.6,548.3 L359.5,544.7 L355.9,541.0 L352.7,537.0 L350.0,532.8 L347.8,528.4 L346.1,523.7 L345.0,518.7 L344.5,513.5 L344.6,508.3 L345.2,503.2 L346.4,498.6 L348.0,494.6 L350.1,491.6 Z" fill="url(#grim)" filter="url(#bl2)"/>
<path d="M343.9,519.7 L346.0,518.6 L348.6,518.3 L351.5,518.5 L354.8,519.4 L358.4,520.7 L362.2,522.5 L366.3,524.7 L370.5,527.1 L374.7,529.8 L379.1,532.7 L383.4,535.6 L387.6,538.5 L391.8,541.4 L395.8,544.2 L399.7,547.0 L403.5,549.7 L407.3,552.3 L411.0,554.8 L414.6,557.3 L418.2,559.7 L421.9,562.0 L425.5,564.3 L429.1,566.5 L432.8,568.6 L436.5,570.7 L440.2,572.7 L444.0,574.7 L447.9,576.6 L451.8,578.4 L455.7,580.2 L459.7,582.0 L463.6,583.7 L467.7,585.4 L471.7,587.0 L475.8,588.6 L479.8,590.2 L483.9,591.8 L488.1,593.3 L492.2,594.8 L496.3,596.3 L500.4,597.8 L504.6,599.2 L508.7,600.6 L512.8,602.1 L516.9,603.5 L521.0,604.9 L525.1,606.4 L529.2,607.8 L533.3,609.2 L537.3,610.7 L541.3,612.1 L545.3,613.6 L549.2,615.1 L553.2,616.6 L557.1,618.1 L560.9,619.6 L564.8,621.1 L568.6,622.7 L572.5,624.3 L576.3,625.9 L580.1,627.5 L583.8,629.1 L587.6,630.7 L591.4,632.4 L595.1,634.1 L598.9,635.8 L602.7,637.5 L606.4,639.2 L610.2,641.0 L613.9,642.8 L617.7,644.6 L621.4,646.4 L625.2,648.2 L629.0,650.1 L632.8,652.0 L636.6,653.9 L640.4,655.8 L644.3,657.8 L648.1,659.7 L652.0,661.7 L655.9,663.8 L659.8,665.8 L663.8,667.9 L667.7,670.0 L671.7,672.1 L675.7,674.2 L679.8,676.4 L683.8,678.5 L687.8,680.7 L691.9,682.9 L696.0,685.1 L700.0,687.4 L704.1,689.6 L708.2,691.8 L712.2,694.1 L716.3,696.4 L720.4,698.6 L724.4,700.9 L728.5,703.2 L732.5,705.4 L736.5,707.7 L740.5,710.0 L744.5,712.2 L748.5,714.5 L752.4,716.7 L756.3,719.0 L760.2,721.2 L764.1,723.5 L767.9,725.7 L771.7,727.9 L775.5,730.1 L779.2,732.3 L782.9,734.4 L786.6,736.6 L790.2,738.7 L793.8,740.8 L797.3,742.9 L800.8,744.9 L804.2,747.0 L807.5,749.0 L810.7,750.9 L813.6,752.7 L816.2,754.4 L818.2,755.8 L819.6,757.0 L820.2,757.9 L820.0,758.4 L819.0,758.6 L817.2,758.5 L814.7,758.1 L811.8,757.5 L808.6,756.7 L805.1,755.7 L801.5,754.7 L797.8,753.6 L794.2,752.5 L790.5,751.2 L786.8,750.0 L783.1,748.6 L779.3,747.3 L775.5,745.8 L771.8,744.4 L767.9,742.8 L764.1,741.3 L760.3,739.7 L756.4,738.0 L752.5,736.3 L748.6,734.6 L744.7,732.8 L740.8,731.0 L736.8,729.2 L732.9,727.4 L728.9,725.5 L724.9,723.6 L720.9,721.7 L716.9,719.7 L712.9,717.8 L708.8,715.8 L704.8,713.8 L700.7,711.8 L696.7,709.8 L692.6,707.8 L688.5,705.8 L684.5,703.7 L680.4,701.7 L676.3,699.7 L672.2,697.7 L668.1,695.6 L664.0,693.6 L659.9,691.6 L655.8,689.6 L651.7,687.7 L647.6,685.7 L643.5,683.8 L639.4,681.9 L635.3,680.0 L631.2,678.1 L627.2,676.2 L623.1,674.4 L619.0,672.6 L614.9,670.9 L610.8,669.1 L606.8,667.5 L602.7,665.8 L598.7,664.2 L594.6,662.6 L590.6,661.1 L586.6,659.6 L582.6,658.2 L578.6,656.7 L574.6,655.3 L570.6,654.0 L566.6,652.6 L562.7,651.3 L558.7,650.0 L554.7,648.7 L550.8,647.4 L546.8,646.1 L542.9,644.8 L539.0,643.5 L535.1,642.2 L531.2,640.9 L527.2,639.6 L523.3,638.3 L519.4,636.9 L515.6,635.5 L511.7,634.2 L507.8,632.7 L503.9,631.3 L500.1,629.8 L496.2,628.3 L492.3,626.7 L488.5,625.1 L484.7,623.5 L480.8,621.8 L477.0,620.0 L473.1,618.2 L469.3,616.4 L465.5,614.5 L461.6,612.6 L457.8,610.6 L453.9,608.6 L450.1,606.6 L446.2,604.6 L442.4,602.5 L438.5,600.5 L434.6,598.4 L430.6,596.3 L426.7,594.2 L422.7,592.2 L418.8,590.1 L414.8,588.0 L410.7,586.0 L406.7,583.9 L402.6,581.9 L398.5,580.0 L394.3,578.0 L390.1,576.1 L385.9,574.2 L381.6,572.4 L377.4,570.5 L373.2,568.6 L369.2,566.7 L365.2,564.6 L361.4,562.4 L357.9,560.1 L354.5,557.6 L351.4,554.9 L348.7,552.0 L346.3,548.8 L344.3,545.3 L342.7,541.6 L341.5,537.8 L340.8,534.0 L340.5,530.3 L340.6,526.9 L341.2,523.9 L342.3,521.5 L343.9,519.7 Z" fill="url(#gband)" filter="url(#bl2)"/>
<path d="M357.3,483.7 L356.8,479.3 L357.1,475.0 L358.3,470.7 L360.3,466.5 L362.9,462.4 L366.2,458.4 L370.1,454.5 L374.5,450.7 L379.3,447.2 L384.5,443.7 L390.1,440.5 L395.9,437.4 L402.0,434.5 L408.2,431.8 L414.5,429.4 L420.8,427.2 L427.1,425.3 L433.4,423.5 L439.7,422.1 L445.9,420.8 L452.1,419.8 L458.3,419.0 L464.5,418.4 L470.7,418.0 L476.8,417.8 L482.9,417.8 L489.0,418.0 L495.1,418.4 L501.1,418.9 L507.1,419.6 L513.1,420.5 L519.0,421.5 L524.9,422.7 L530.8,424.1 L536.7,425.5 L542.5,427.1 L548.3,428.8 L554.0,430.7 L559.7,432.7 L565.4,434.7 L571.1,436.9 L576.7,439.2 L582.2,441.5 L587.7,444.0 L593.2,446.5 L598.7,449.1 L604.1,451.7 L609.5,454.5 L614.9,457.3 L620.2,460.1 L625.5,463.0 L630.8,466.0 L636.1,469.0 L641.4,472.0 L646.6,475.1 L651.8,478.2 L657.1,481.4 L662.3,484.5 L667.5,487.7 L672.7,490.9 L677.9,494.1 L683.1,497.3 L688.3,500.5 L693.5,503.7 L698.7,506.9 L703.9,510.1 L709.2,513.2 L714.4,516.4 L719.7,519.5 L725.0,522.6 L730.3,525.6 L735.6,528.6 L741.0,531.6 L746.3,534.5 L751.7,537.3 L757.2,540.1 L762.7,542.9 L768.2,545.5 L773.7,548.1 L779.3,550.7 L784.9,553.1 L790.6,555.5 L796.3,557.8 L802.0,560.0 L807.8,562.1 L813.6,564.2 L819.4,566.2 L825.2,568.1 L831.1,570.0 L837.0,571.9 L842.9,573.6 L848.7,575.4 L854.6,577.0 L860.6,578.7 L866.5,580.2 L872.4,581.8 L878.3,583.3 L884.1,584.8 L890.0,586.2 L895.9,587.6 L901.7,589.0 L907.5,590.4 L913.3,591.7 L919.1,593.1 L924.9,594.4 L930.7,595.6 L936.4,596.9 L942.2,598.1 L948.0,599.3 L953.7,600.5 L959.5,601.7 L965.3,602.8 L971.2,603.9 L977.0,605.0 L982.9,606.1 L988.8,607.2 L994.7,608.2 L1000.7,609.3 L1006.7,610.3 L1012.8,611.2 L1018.9,612.2 L1025.0,613.2 L1031.2,614.1 L1037.5,615.0 L1043.8,615.9 L1050.2,616.8 L1056.7,617.6 L1063.2,618.4 L1069.8,619.3 L1076.4,620.1 L1083.1,621.0 L1089.7,621.9 L1096.3,622.9 L1102.8,624.0 L1109.3,625.2 L1115.7,626.5 L1121.9,627.9 L1128.0,629.5 L1134.0,631.3 L1139.7,633.3 L1145.2,635.5 L1150.5,637.9 L1155.5,640.6 L1160.3,643.6 L1164.7,646.9 L1168.8,650.4 L1172.3,654.3 L1175.0,658.2 L1176.6,662.3 L1176.8,666.3 L1175.7,670.3 L1173.4,674.2 L1170.1,677.9 L1166.2,681.6 L1161.8,685.0 L1157.1,688.2 L1152.2,691.3 L1147.1,694.2 L1141.8,696.9 L1136.3,699.5 L1130.6,701.9 L1124.7,704.2 L1118.8,706.3 L1112.7,708.3 L1106.5,710.2 L1100.2,712.0 L1093.8,713.7 L1087.4,715.4 L1081.0,716.9 L1074.5,718.4 L1068.0,719.8 L1061.6,721.2 L1055.1,722.6 L1048.7,723.8 L1042.4,725.1 L1036.0,726.3 L1029.7,727.5 L1023.5,728.6 L1017.2,729.7 L1011.0,730.7 L1004.8,731.6 L998.7,732.5 L992.6,733.4 L986.5,734.2 L980.4,734.9 L974.3,735.5 L968.3,736.1 L962.3,736.6 L956.4,737.0 L950.4,737.4 L944.5,737.7 L938.6,737.9 L932.8,738.0 L926.9,738.0 L921.1,738.0 L915.3,737.9 L909.5,737.6 L903.8,737.3 L898.1,736.9 L892.3,736.4 L886.7,735.7 L881.0,735.0 L875.3,734.2 L869.7,733.3 L864.1,732.2 L858.5,731.1 L852.9,729.8 L847.3,728.4 L841.8,726.9 L836.2,725.3 L830.7,723.6 L825.2,721.7 L819.7,719.7 L814.2,717.6 L808.8,715.3 L803.3,713.0 L797.9,710.4 L792.4,707.8 L787.0,705.0 L781.6,702.1 L776.2,699.1 L770.8,696.0 L765.4,692.8 L760.0,689.6 L754.7,686.2 L749.3,682.8 L743.9,679.4 L738.6,675.9 L733.2,672.4 L727.9,668.9 L722.5,665.3 L717.2,661.8 L711.8,658.3 L706.5,654.7 L701.1,651.3 L695.8,647.8 L690.4,644.4 L685.0,641.0 L679.7,637.8 L674.3,634.5 L668.9,631.4 L663.5,628.4 L658.1,625.4 L652.7,622.6 L647.3,619.9 L641.9,617.3 L636.5,614.7 L631.0,612.3 L625.6,609.9 L620.1,607.7 L614.6,605.4 L609.1,603.3 L603.6,601.2 L598.1,599.2 L592.6,597.2 L587.1,595.3 L581.5,593.4 L575.9,591.5 L570.3,589.7 L564.7,587.9 L559.1,586.2 L553.5,584.4 L547.8,582.6 L542.2,580.9 L536.5,579.1 L530.8,577.4 L525.0,575.6 L519.3,573.8 L513.5,572.0 L507.7,570.2 L501.9,568.3 L496.1,566.4 L490.2,564.5 L484.3,562.5 L478.4,560.4 L472.5,558.3 L466.6,556.1 L460.6,553.9 L454.6,551.6 L448.6,549.2 L442.5,546.7 L436.4,544.1 L430.3,541.5 L424.2,538.7 L418.1,535.8 L412.0,532.9 L406.1,529.8 L400.2,526.6 L394.6,523.3 L389.2,519.9 L384.0,516.3 L379.2,512.7 L374.6,508.9 L370.5,505.0 L366.8,501.0 L363.6,496.8 L360.8,492.6 L358.7,488.2 L357.3,483.7 Z" fill="#a4a7ab" stroke="#a4a7ab" stroke-width="10" stroke-linejoin="round" filter="url(#bl)" opacity="0.9"/>
<path d="M357.3,483.7 L356.8,479.3 L357.1,475.0 L358.3,470.7 L360.3,466.5 L362.9,462.4 L366.2,458.4 L370.1,454.5 L374.5,450.7 L379.3,447.2 L384.5,443.7 L390.1,440.5 L395.9,437.4 L402.0,434.5 L408.2,431.8 L414.5,429.4 L420.8,427.2 L427.1,425.3 L433.4,423.5 L439.7,422.1 L445.9,420.8 L452.1,419.8 L458.3,419.0 L464.5,418.4 L470.7,418.0 L476.8,417.8 L482.9,417.8 L489.0,418.0 L495.1,418.4 L501.1,418.9 L507.1,419.6 L513.1,420.5 L519.0,421.5 L524.9,422.7 L530.8,424.1 L536.7,425.5 L542.5,427.1 L548.3,428.8 L554.0,430.7 L559.7,432.7 L565.4,434.7 L571.1,436.9 L576.7,439.2 L582.2,441.5 L587.7,444.0 L593.2,446.5 L598.7,449.1 L604.1,451.7 L609.5,454.5 L614.9,457.3 L620.2,460.1 L625.5,463.0 L630.8,466.0 L636.1,469.0 L641.4,472.0 L646.6,475.1 L651.8,478.2 L657.1,481.4 L662.3,484.5 L667.5,487.7 L672.7,490.9 L677.9,494.1 L683.1,497.3 L688.3,500.5 L693.5,503.7 L698.7,506.9 L703.9,510.1 L709.2,513.2 L714.4,516.4 L719.7,519.5 L725.0,522.6 L730.3,525.6 L735.6,528.6 L741.0,531.6 L746.3,534.5 L751.7,537.3 L757.2,540.1 L762.7,542.9 L768.2,545.5 L773.7,548.1 L779.3,550.7 L784.9,553.1 L790.6,555.5 L796.3,557.8 L802.0,560.0 L807.8,562.1 L813.6,564.2 L819.4,566.2 L825.2,568.1 L831.1,570.0 L837.0,571.9 L842.9,573.6 L848.7,575.4 L854.6,577.0 L860.6,578.7 L866.5,580.2 L872.4,581.8 L878.3,583.3 L884.1,584.8 L890.0,586.2 L895.9,587.6 L901.7,589.0 L907.5,590.4 L913.3,591.7 L919.1,593.1 L924.9,594.4 L930.7,595.6 L936.4,596.9 L942.2,598.1 L948.0,599.3 L953.7,600.5 L959.5,601.7 L965.3,602.8 L971.2,603.9 L977.0,605.0 L982.9,606.1 L988.8,607.2 L994.7,608.2 L1000.7,609.3 L1006.7,610.3 L1012.8,611.2 L1018.9,612.2 L1025.0,613.2 L1031.2,614.1 L1037.5,615.0 L1043.8,615.9 L1050.2,616.8 L1056.7,617.6 L1063.2,618.4 L1069.8,619.3 L1076.4,620.1 L1083.1,621.0 L1089.7,621.9 L1096.3,622.9 L1102.8,624.0 L1109.3,625.2 L1115.7,626.5 L1121.9,627.9 L1128.0,629.5 L1134.0,631.3 L1139.7,633.3 L1145.2,635.5 L1150.5,637.9 L1155.5,640.6 L1160.3,643.6 L1164.7,646.9 L1168.8,650.4 L1172.3,654.3 L1175.0,658.2 L1176.6,662.3 L1176.8,666.3 L1175.7,670.3 L1173.4,674.2 L1170.1,677.9 L1166.2,681.6 L1161.8,685.0 L1157.1,688.2 L1152.2,691.3 L1147.1,694.2 L1141.8,696.9 L1136.3,699.5 L1130.6,701.9 L1124.7,704.2 L1118.8,706.3 L1112.7,708.3 L1106.5,710.2 L1100.2,712.0 L1093.8,713.7 L1087.4,715.4 L1081.0,716.9 L1074.5,718.4 L1068.0,719.8 L1061.6,721.2 L1055.1,722.6 L1048.7,723.8 L1042.4,725.1 L1036.0,726.3 L1029.7,727.5 L1023.5,728.6 L1017.2,729.7 L1011.0,730.7 L1004.8,731.6 L998.7,732.5 L992.6,733.4 L986.5,734.2 L980.4,734.9 L974.3,735.5 L968.3,736.1 L962.3,736.6 L956.4,737.0 L950.4,737.4 L944.5,737.7 L938.6,737.9 L932.8,738.0 L926.9,738.0 L921.1,738.0 L915.3,737.9 L909.5,737.6 L903.8,737.3 L898.1,736.9 L892.3,736.4 L886.7,735.7 L881.0,735.0 L875.3,734.2 L869.7,733.3 L864.1,732.2 L858.5,731.1 L852.9,729.8 L847.3,728.4 L841.8,726.9 L836.2,725.3 L830.7,723.6 L825.2,721.7 L819.7,719.7 L814.2,717.6 L808.8,715.3 L803.3,713.0 L797.9,710.4 L792.4,707.8 L787.0,705.0 L781.6,702.1 L776.2,699.1 L770.8,696.0 L765.4,692.8 L760.0,689.6 L754.7,686.2 L749.3,682.8 L743.9,679.4 L738.6,675.9 L733.2,672.4 L727.9,668.9 L722.5,665.3 L717.2,661.8 L711.8,658.3 L706.5,654.7 L701.1,651.3 L695.8,647.8 L690.4,644.4 L685.0,641.0 L679.7,637.8 L674.3,634.5 L668.9,631.4 L663.5,628.4 L658.1,625.4 L652.7,622.6 L647.3,619.9 L641.9,617.3 L636.5,614.7 L631.0,612.3 L625.6,609.9 L620.1,607.7 L614.6,605.4 L609.1,603.3 L603.6,601.2 L598.1,599.2 L592.6,597.2 L587.1,595.3 L581.5,593.4 L575.9,591.5 L570.3,589.7 L564.7,587.9 L559.1,586.2 L553.5,584.4 L547.8,582.6 L542.2,580.9 L536.5,579.1 L530.8,577.4 L525.0,575.6 L519.3,573.8 L513.5,572.0 L507.7,570.2 L501.9,568.3 L496.1,566.4 L490.2,564.5 L484.3,562.5 L478.4,560.4 L472.5,558.3 L466.6,556.1 L460.6,553.9 L454.6,551.6 L448.6,549.2 L442.5,546.7 L436.4,544.1 L430.3,541.5 L424.2,538.7 L418.1,535.8 L412.0,532.9 L406.1,529.8 L400.2,526.6 L394.6,523.3 L389.2,519.9 L384.0,516.3 L379.2,512.7 L374.6,508.9 L370.5,505.0 L366.8,501.0 L363.6,496.8 L360.8,492.6 L358.7,488.2 L357.3,483.7 Z" fill="url(#gs)"/>
<path d="M345.2,529.4 L344.3,536.9 L344.2,544.2 L344.6,551.1 L345.7,557.8 L347.3,564.1 L349.4,570.2 L352.0,576.0 L355.1,581.6 L358.6,586.9 L362.5,592.0 L366.7,596.8 L371.2,601.3 L376.0,605.7 L381.0,609.8 L386.2,613.7 L391.7,617.4 L397.3,620.9 L403.1,624.2 L409.1,627.4 L415.2,630.4 L421.4,633.2 L427.7,635.9 L434.1,638.5 L440.6,640.9 L447.2,643.3 L453.7,645.5 L460.3,647.7 L466.9,649.7 L473.5,651.7 L480.1,653.6 L486.7,655.5 L493.2,657.3 L499.7,659.1 L506.3,660.9 L512.8,662.6 L519.2,664.2 L525.7,665.9 L532.2,667.6 L538.6,669.2 L545.1,670.9 L551.5,672.5 L557.9,674.2 L564.3,675.9 L570.7,677.6 L577.1,679.4 L583.4,681.2 L589.8,683.0 L596.1,684.9 L602.4,686.9 L608.8,688.9 L615.1,691.0 L621.4,693.1 L627.6,695.3 L633.9,697.5 L640.2,699.8 L646.5,702.1 L652.7,704.5 L659.0,706.9 L665.2,709.3 L671.5,711.7 L677.7,714.2 L684.0,716.7 L690.2,719.2 L696.5,721.7 L702.7,724.3 L708.9,726.8 L715.2,729.3 L721.4,731.8 L727.7,734.4 L734.0,736.9 L740.2,739.4 L746.5,741.8 L752.8,744.3 L759.1,746.7 L765.4,749.1 L771.7,751.4 L778.0,753.7 L784.4,755.9 L790.7,758.0 L797.1,760.0 L803.4,762.0 L809.8,763.8 L816.3,765.6 L822.7,767.2 L829.1,768.7 L835.6,770.1 L842.1,771.4 L848.6,772.5 L855.1,773.4 L861.7,774.2 L868.3,774.9 L874.9,775.3 L881.5,775.6 L888.1,775.7 L894.8,775.7 L901.5,775.5 L908.2,775.2 L914.9,774.7 L921.6,774.2 L928.3,773.5 L935.1,772.8 L941.8,771.9 L948.5,771.0 L955.2,770.0 L962.0,769.0 L968.7,767.9 L975.4,766.7 L982.0,765.6 L988.7,764.4 L995.4,763.1 L1002.0,761.9 L1008.6,760.6 L1015.2,759.3 L1021.8,757.9 L1028.4,756.5 L1034.9,755.0 L1041.5,753.6 L1048.0,752.0 L1054.5,750.5 L1061.0,748.9 L1067.5,747.2 L1073.9,745.5 L1080.4,743.7 L1086.8,741.9 L1093.2,740.0 L1099.6,738.1 L1105.9,736.1 L1112.3,734.0 L1118.6,731.8 L1124.8,729.5 L1131.0,727.1 L1137.1,724.5 L1143.1,721.7 L1149.0,718.8 L1154.8,715.7 L1160.6,712.3 L1166.2,708.8 L1171.7,705.0 L1177.0,700.9" fill="none" stroke="#2f3b46" stroke-width="3.2"/>
</g>
</g></svg>
<svg class="a" style="left:734.1px;top:567px;" width="60" height="60" viewBox="0 0 60 60">
<circle cx="30" cy="30" r="13.6" fill="none" stroke="#fff" stroke-width="2.2"/>
<circle cx="30" cy="30" r="13.6" fill="none" stroke="#d8283a" stroke-width="2.2" stroke-dasharray="5.3 5.4"/>
<path d="M30 4 L30 23.2 M30 36.8 L30 56.5 M3.2 30 L22.5 30 M37.2 30 L56.4 30" stroke="#2a2a2a" stroke-width="1.9"/>
<circle cx="30" cy="30" r="3.9" fill="#f0a848" stroke="#1a1a1a" stroke-width="1.4"/></svg>
<div class="t" style="left:239.7px;top:96.96px;font-size:16px;line-height:16px;color:#e8e8e8;letter-spacing:0;text-shadow:0 0 2px #000,1px 1px 1px #000">User Ortho</div>
<div class="t" style="left:239.7px;top:123.46px;font-size:16px;line-height:16px;color:#e8e8e8;letter-spacing:0;text-shadow:0 0 2px #000,1px 1px 1px #000">Meters</div>
<svg class="a" style="left:240px;top:1010px;" width="50" height="55" viewBox="0 0 50 55">
<path d="M7 40 L7 23.5" stroke="#1438c8" stroke-width="2.6"/>
<path d="M7 40 L34 21.3" stroke="#38c838" stroke-width="2.6"/>
<path d="M7 40 L34 48.2" stroke="#d01818" stroke-width="2.6"/>
<text x="11" y="14" font-family="Liberation Sans" font-size="10" fill="#1838c0">z</text>
<text x="36" y="46" font-family="Liberation Sans" font-size="10" fill="#c01818">x</text></svg>
<div class="t" style="left:273.4px;top:1059.30px;font-size:15px;line-height:15px;color:#e8e8e8;text-shadow:0 0 2px #000">(70) shoe_test</div>
<div style="position:absolute;left:1271px;top:82px;width:240px;height:1003px;overflow:hidden"><div style="position:absolute;left:-1271px;top:-82px;width:1920px;height:1200px">
<div class="a " style="left:1489px;top:88px;width:17px;height:991.4px;border-radius:8px;background:#5a5a5a;border:1px solid #555"></div>
<div class="a " style="left:1490.5px;top:287.5px;width:15px;height:265.8px;border-radius:8px;border:1px solid #4a4a4a;background:linear-gradient(90deg,#9c9c9c,#888)"></div>
<svg class="a" style="left:1494px;top:82px;" width="17" height="16" viewBox="0 0 17 16"><path d="M1 0 L16 15 M6 0 L16 10 M11 0 L16 5" stroke="#8c8c8c" stroke-width="1.2"/><path d="M2.5 0 L16 13.5 M7.5 0 L16 8.5" stroke="#5a5a5a" stroke-width="0.8"/></svg>
<div class="t" style="left:1293.7px;top:76.30px;font-size:15px;line-height:15px;color:#111;">Lock to Object:</div>
<div class="a tf" style="left:1282.4px;top:99.2px;width:195.8px;height:25.1px;border-radius:5px;background:linear-gradient(#9e9e9e,#b6b6b6)"></div>
<svg class="a" style="left:1289.5px;top:102.5px;" width="18" height="18" viewBox="0 0 18 18"><g transform="scale(1.000)"><path d="M9 1 L16.5 4.8 L16.5 13.2 L9 17 L1.5 13.2 L1.5 4.8Z" fill="#3a2a18"/><path d="M9 2.4 L15.2 5.5 L9 8.6 L2.8 5.5Z" fill="#f6d6a8"/><path d="M2.8 5.5 L9 8.6 L9 15.6 L2.8 12.5Z" fill="#e79a3c"/><path d="M15.2 5.5 L9 8.6 L9 15.6 L15.2 12.5Z" fill="#c8772a"/></g></svg>
<svg class="a" style="left:1456px;top:101.5px;" width="20" height="20" viewBox="0 0 20 20"><path d="M2 18 L12 8" stroke="#333" stroke-width="3.8" stroke-linecap="round"/><path d="M2.5 17.5 L12 8" stroke="#e8e8e8" stroke-width="2" stroke-linecap="round"/><path d="M10 5 L15 10" stroke="#111" stroke-width="3.5"/><circle cx="15.5" cy="4.5" r="3.6" fill="#111"/></svg>
<div class="a chk" style="left:1286.2px;top:132px;width:18.5px;height:18.2px;"></div>
<div class="t" style="left:1316.4px;top:134.60px;font-size:15px;line-height:15px;color:#111;">Lock to Cursor</div>
<div class="a chk" style="left:1286.2px;top:165.5px;width:18.5px;height:18.2px;"></div>
<div class="t" style="left:1316.4px;top:168.10px;font-size:15px;line-height:15px;color:#111;">Lock Camera to View</div>
<div class="t" style="left:1292.9px;top:201.70px;font-size:15px;line-height:15px;color:#111;">Clip:</div>
<div class="a num" style="left:1282.5px;top:221.5px;width:195.4000000000001px;height:26.0px;border-radius:9px 9px 0 0;"></div>
<svg class="a" style="left:1291.0px;top:229.0px;" width="6" height="10" viewBox="0 0 6 10"><path d="M5 0.5 L0.5 5 L5 9.5Z" fill="#858585"/></svg>
<svg class="a" style="left:1464.4px;top:229.0px;" width="6" height="10" viewBox="0 0 6 10"><path d="M0.5 0.5 L5 5 L0.5 9.5Z" fill="#858585"/></svg>
<div class="t" style="left:1304.0px;top:227.90px;font-size:15px;line-height:15px;color:#111;">Start:</div>
<div class="t" style="right:463.39999999999986px;text-align:right;top:227.90px;font-size:15px;line-height:15px;color:#111;">10cm</div>
<div class="a num" style="left:1282.5px;top:247.5px;width:195.4000000000001px;height:26.5px;border-radius:0 0 9px 9px;border-top:none;"></div>
<svg class="a" style="left:1291.0px;top:255.25px;" width="6" height="10" viewBox="0 0 6 10"><path d="M5 0.5 L0.5 5 L5 9.5Z" fill="#858585"/></svg>
<svg class="a" style="left:1464.4px;top:255.25px;" width="6" height="10" viewBox="0 0 6 10"><path d="M0.5 0.5 L5 5 L0.5 9.5Z" fill="#858585"/></svg>
<div class="t" style="left:1304.0px;top:253.80px;font-size:15px;line-height:15px;color:#111;">End:</div>
<div class="t" style="right:463.39999999999986px;text-align:right;top:253.80px;font-size:15px;line-height:15px;color:#111;">1km</div>
<div class="t" style="left:1293px;top:281.05px;font-size:15px;line-height:15px;color:#505050;">Local Camera:</div>
<div class="a " style="left:1282.5px;top:301.9px;width:195.4px;height:25px;border-radius:5px;border:1px solid #555;background:linear-gradient(#8a8a8a,#939393)"></div>
<svg class="a" style="left:1289.5px;top:304.5px;" width="18" height="18" viewBox="0 0 18 18"><g opacity="0.75"><g transform="scale(1.000)"><path d="M9 1 L16.5 4.8 L16.5 13.2 L9 17 L1.5 13.2 L1.5 4.8Z" fill="#3a2a18"/><path d="M9 2.4 L15.2 5.5 L9 8.6 L2.8 5.5Z" fill="#f6d6a8"/><path d="M2.8 5.5 L9 8.6 L9 15.6 L2.8 12.5Z" fill="#e79a3c"/><path d="M15.2 5.5 L9 8.6 L9 15.6 L15.2 12.5Z" fill="#c8772a"/></g></g></svg>
<div class="t" style="left:1314.75px;top:308.30px;font-size:15px;line-height:15px;color:#505050;">Camera.001</div>
<svg class="a" style="left:1457.5px;top:307px;" width="15" height="14" viewBox="0 0 15 14"><path d="M3 2.5 L12 11.5 M12 2.5 L3 11.5" stroke="#555" stroke-width="4"/><path d="M3 2.5 L12 11.5 M12 2.5 L3 11.5" stroke="#f0f0f0" stroke-width="2.2"/></svg>
<div class="a chk" style="left:1286px;top:339px;width:18.5px;height:18.2px;"></div>
<div class="t" style="left:1316px;top:341.70px;font-size:15px;line-height:15px;color:#111;">Render Border</div>
<div class="a " style="left:1274.75px;top:370.75px;width:211px;height:1px;background:#5e5e5e"></div>
<div class="a " style="left:1274.75px;top:371.75px;width:211px;height:1px;background:#7a7a7a"></div>
<svg class="a" style="left:1284.4px;top:381.5px;" width="10" height="10" viewBox="0 0 10 10"><path d="M0 0 L9.6 0 L4.8 10Z" fill="#1c1c1c"/></svg>
<div class="t" style="left:1302.3px;top:378.53px;font-size:16.5px;line-height:16.5px;color:#111;letter-spacing:0.05px">3D Cursor</div>
<svg class="a" style="left:1465.4px;top:386.25px;" width="11" height="5" viewBox="0 0 11 5"><rect x="0.0" y="0" width="1.8" height="1.8" fill="#d8d8d8"/><rect x="2.8" y="0" width="1.8" height="1.8" fill="#d8d8d8"/><rect x="5.6" y="0" width="1.8" height="1.8" fill="#d8d8d8"/><rect x="8.399999999999999" y="0" width="1.8" height="1.8" fill="#d8d8d8"/><rect x="0.0" y="3" width="1.8" height="1.8" fill="#d8d8d8"/><rect x="2.8" y="3" width="1.8" height="1.8" fill="#d8d8d8"/><rect x="5.6" y="3" width="1.8" height="1.8" fill="#d8d8d8"/><rect x="8.399999999999999" y="3" width="1.8" height="1.8" fill="#d8d8d8"/></svg>
<div class="t" style="left:1293px;top:418.55px;font-size:15px;line-height:15px;color:#111;">Location:</div>
<div class="a num" style="left:1282.5px;top:439.4px;width:195.4000000000001px;height:25.600000000000023px;border-radius:9px 9px 0 0;"></div>
<svg class="a" style="left:1291.0px;top:446.7px;" width="6" height="10" viewBox="0 0 6 10"><path d="M5 0.5 L0.5 5 L5 9.5Z" fill="#858585"/></svg>
<svg class="a" style="left:1464.4px;top:446.7px;" width="6" height="10" viewBox="0 0 6 10"><path d="M0.5 0.5 L5 5 L0.5 9.5Z" fill="#858585"/></svg>
<div class="t" style="left:1304.0px;top:445.60px;font-size:15px;line-height:15px;color:#111;">X:</div>
<div class="t" style="right:463.39999999999986px;text-align:right;top:445.60px;font-size:15px;line-height:15px;color:#111;">0m</div>
<div class="a num" style="left:1282.5px;top:465px;width:195.4000000000001px;height:26.30000000000001px;border-radius:0;border-top:none;"></div>
<svg class="a" style="left:1291.0px;top:472.65px;" width="6" height="10" viewBox="0 0 6 10"><path d="M5 0.5 L0.5 5 L5 9.5Z" fill="#858585"/></svg>
<svg class="a" style="left:1464.4px;top:472.65px;" width="6" height="10" viewBox="0 0 6 10"><path d="M0.5 0.5 L5 5 L0.5 9.5Z" fill="#858585"/></svg>
<div class="t" style="left:1304.0px;top:472.00px;font-size:15px;line-height:15px;color:#111;">Y:</div>
<div class="t" style="right:463.39999999999986px;text-align:right;top:472.00px;font-size:15px;line-height:15px;color:#111;">0m</div>
<div class="a num" style="left:1282.5px;top:491.3px;width:195.4000000000001px;height:26.19999999999999px;border-radius:0 0 9px 9px;border-top:none;"></div>
<svg class="a" style="left:1291.0px;top:498.9px;" width="6" height="10" viewBox="0 0 6 10"><path d="M5 0.5 L0.5 5 L5 9.5Z" fill="#858585"/></svg>
<svg class="a" style="left:1464.4px;top:498.9px;" width="6" height="10" viewBox="0 0 6 10"><path d="M0.5 0.5 L5 5 L0.5 9.5Z" fill="#858585"/></svg>
<div class="t" style="left:1304.0px;top:498.10px;font-size:15px;line-height:15px;color:#111;">Z:</div>
<div class="t" style="right:463.39999999999986px;text-align:right;top:498.10px;font-size:15px;line-height:15px;color:#111;">0m</div>
<div class="a " style="left:1274.75px;top:529.5px;width:211px;height:1px;background:#5e5e5e"></div>
<div class="a " style="left:1274.75px;top:530.5px;width:211px;height:1px;background:#7a7a7a"></div>
<svg class="a" style="left:1284.4px;top:539.5px;" width="10" height="10" viewBox="0 0 10 10"><path d="M0 0 L9.6 0 L4.8 10Z" fill="#1c1c1c"/></svg>
<div class="t" style="left:1302.3px;top:536.03px;font-size:16.5px;line-height:16.5px;color:#111;letter-spacing:0.05px">Item</div>
<svg class="a" style="left:1465.4px;top:544.2px;" width="11" height="5" viewBox="0 0 11 5"><rect x="0.0" y="0" width="1.8" height="1.8" fill="#d8d8d8"/><rect x="2.8" y="0" width="1.8" height="1.8" fill="#d8d8d8"/><rect x="5.6" y="0" width="1.8" height="1.8" fill="#d8d8d8"/><rect x="8.399999999999999" y="0" width="1.8" height="1.8" fill="#d8d8d8"/><rect x="0.0" y="3" width="1.8" height="1.8" fill="#d8d8d8"/><rect x="2.8" y="3" width="1.8" height="1.8" fill="#d8d8d8"/><rect x="5.6" y="3" width="1.8" height="1.8" fill="#d8d8d8"/><rect x="8.399999999999999" y="3" width="1.8" height="1.8" fill="#d8d8d8"/></svg>
<svg class="a" style="left:1287px;top:573px;" width="18" height="18" viewBox="0 0 18 18"><g transform="scale(1.000)"><path d="M9 1 L16.5 4.8 L16.5 13.2 L9 17 L1.5 13.2 L1.5 4.8Z" fill="#3a2a18"/><path d="M9 2.4 L15.2 5.5 L9 8.6 L2.8 5.5Z" fill="#f6d6a8"/><path d="M2.8 5.5 L9 8.6 L9 15.6 L2.8 12.5Z" fill="#e79a3c"/><path d="M15.2 5.5 L9 8.6 L9 15.6 L15.2 12.5Z" fill="#c8772a"/></g></svg>
<div class="a tf" style="left:1319.7px;top:569.7px;width:158.8px;height:25.6px;"></div>
<div class="t" style="left:1330.2px;top:575.60px;font-size:15px;line-height:15px;color:#111;">shoe_test</div>
<div class="a " style="left:1274.75px;top:606.2px;width:211px;height:1px;background:#5e5e5e"></div>
<div class="a " style="left:1274.75px;top:607.2px;width:211px;height:1px;background:#7a7a7a"></div>
<svg class="a" style="left:1284.4px;top:616.5px;" width="10" height="10" viewBox="0 0 10 10"><path d="M0 0 L9.6 0 L4.8 10Z" fill="#1c1c1c"/></svg>
<div class="t" style="left:1302.3px;top:612.73px;font-size:16.5px;line-height:16.5px;color:#111;letter-spacing:0.05px">Display</div>
<svg class="a" style="left:1465.4px;top:621px;" width="11" height="5" viewBox="0 0 11 5"><rect x="0.0" y="0" width="1.8" height="1.8" fill="#d8d8d8"/><rect x="2.8" y="0" width="1.8" height="1.8" fill="#d8d8d8"/><rect x="5.6" y="0" width="1.8" height="1.8" fill="#d8d8d8"/><rect x="8.399999999999999" y="0" width="1.8" height="1.8" fill="#d8d8d8"/><rect x="0.0" y="3" width="1.8" height="1.8" fill="#d8d8d8"/><rect x="2.8" y="3" width="1.8" height="1.8" fill="#d8d8d8"/><rect x="5.6" y="3" width="1.8" height="1.8" fill="#d8d8d8"/><rect x="8.399999999999999" y="3" width="1.8" height="1.8" fill="#d8d8d8"/></svg>
<div class="a chk" style="left:1286px;top:650.8px;width:18.5px;height:18.2px;"></div>
<div class="t" style="left:1315.7px;top:653.60px;font-size:15px;line-height:15px;color:#111;">Only Render</div>
<div class="a chk" style="left:1286px;top:680px;width:18.5px;height:18.2px;"></div>
<div class="t" style="left:1315.7px;top:682.60px;font-size:15px;line-height:15px;color:#111;">World Background</div>
<div class="a chk" style="left:1286px;top:714.2px;width:18.5px;height:18.2px;"></div>
<svg class="a" style="left:1286px;top:711.2px;" width="20" height="18" viewBox="0 0 20 18"><path d="M4 9.5 L8 13.5 L17 2" fill="none" stroke="#333" stroke-width="4" stroke-linecap="round"/><path d="M4 9.5 L8 13.5 L17 2" fill="none" stroke="#f0f0f0" stroke-width="2.4" stroke-linecap="round"/></svg>
<div class="t" style="left:1315.7px;top:716.50px;font-size:15px;line-height:15px;color:#f2f2f2;">Outline Selected</div>
<div class="a chk" style="left:1286px;top:743.3px;width:18.5px;height:18.2px;"></div>
<div class="t" style="left:1315.7px;top:745.60px;font-size:15px;line-height:15px;color:#111;">All Object Origins</div>
<div class="a chk" style="left:1286px;top:772.5px;width:18.5px;height:18.2px;"></div>
<svg class="a" style="left:1286px;top:769.5px;" width="20" height="18" viewBox="0 0 20 18"><path d="M4 9.5 L8 13.5 L17 2" fill="none" stroke="#333" stroke-width="4" stroke-linecap="round"/><path d="M4 9.5 L8 13.5 L17 2" fill="none" stroke="#f0f0f0" stroke-width="2.4" stroke-linecap="round"/></svg>
<div class="t" style="left:1315.7px;top:774.80px;font-size:15px;line-height:15px;color:#f2f2f2;">Relationship Lines</div>
<div class="a chk" style="left:1286px;top:805.8px;width:18.5px;height:18.2px;"></div>
<svg class="a" style="left:1286px;top:802.8px;" width="20" height="18" viewBox="0 0 20 18"><path d="M4 9.5 L8 13.5 L17 2" fill="none" stroke="#333" stroke-width="4" stroke-linecap="round"/><path d="M4 9.5 L8 13.5 L17 2" fill="none" stroke="#f0f0f0" stroke-width="2.4" stroke-linecap="round"/></svg>
<div class="t" style="left:1315.7px;top:808.10px;font-size:15px;line-height:15px;color:#f2f2f2;">Grid Floo</div>
<div class="a " style="left:1395.2px;top:801.7px;width:27px;height:25.8px;border-radius:5px 0 0 5px;border:1px solid #333;background:linear-gradient(#6c6c6c,#5c5c5c)"></div>
<div class="a " style="left:1421.8px;top:801.7px;width:28.8px;height:25.8px;border:1px solid #333;background:linear-gradient(#6c6c6c,#5c5c5c)"></div>
<div class="a " style="left:1450.2px;top:801.7px;width:28.3px;height:25.8px;border-radius:0 5px 5px 0;border:1px solid #333;background:linear-gradient(#a4a4a4,#909090)"></div>
<div class="t" style="left:1208.5px;width:400px;text-align:center;top:808.10px;font-size:15px;line-height:15px;color:#f2f2f2;">X</div>
<div class="t" style="left:1236px;width:400px;text-align:center;top:808.10px;font-size:15px;line-height:15px;color:#f2f2f2;">Y</div>
<div class="t" style="left:1264.3px;width:400px;text-align:center;top:808.10px;font-size:15px;line-height:15px;color:#111;">Z</div>
<div class="a num" style="left:1282.5px;top:831.7px;width:196.0px;height:24.59999999999991px;border-radius:9px 9px 0 0;"></div>
<svg class="a" style="left:1291.0px;top:838.5px;" width="6" height="10" viewBox="0 0 6 10"><path d="M5 0.5 L0.5 5 L5 9.5Z" fill="#858585"/></svg>
<svg class="a" style="left:1465.0px;top:838.5px;" width="6" height="10" viewBox="0 0 6 10"><path d="M0.5 0.5 L5 5 L0.5 9.5Z" fill="#858585"/></svg>
<div class="t" style="left:1304.0px;top:838.10px;font-size:15px;line-height:15px;color:#111;">Lines:</div>
<div class="t" style="right:462.79999999999995px;text-align:right;top:838.10px;font-size:15px;line-height:15px;color:#111;">0</div>
<div class="a num" style="left:1282.5px;top:856.3px;width:196.0px;height:27.0px;border-radius:0;border-top:none;"></div>
<svg class="a" style="left:1291.0px;top:864.3px;" width="6" height="10" viewBox="0 0 6 10"><path d="M5 0.5 L0.5 5 L5 9.5Z" fill="#858585"/></svg>
<svg class="a" style="left:1465.0px;top:864.3px;" width="6" height="10" viewBox="0 0 6 10"><path d="M0.5 0.5 L5 5 L0.5 9.5Z" fill="#858585"/></svg>
<div class="t" style="left:1304.0px;top:864.00px;font-size:15px;line-height:15px;color:#111;">Scale:</div>
<div class="t" style="right:462.79999999999995px;text-align:right;top:864.00px;font-size:15px;line-height:15px;color:#111;">1.000</div>
<div class="a num" style="left:1282.5px;top:883.3px;width:196.0px;height:26.700000000000045px;border-radius:0 0 9px 9px;border-top:none;background:linear-gradient(#8c8c8c,#969696);"></div>
<svg class="a" style="left:1291.0px;top:891.15px;" width="6" height="10" viewBox="0 0 6 10"><path d="M5 0.5 L0.5 5 L5 9.5Z" fill="#7e7e7e"/></svg>
<svg class="a" style="left:1465.0px;top:891.15px;" width="6" height="10" viewBox="0 0 6 10"><path d="M0.5 0.5 L5 5 L0.5 9.5Z" fill="#7e7e7e"/></svg>
<div class="t" style="left:1304.0px;top:889.80px;font-size:15px;line-height:15px;color:#5a5a5a;">Subdivisions:</div>
<div class="t" style="right:462.79999999999995px;text-align:right;top:889.80px;font-size:15px;line-height:15px;color:#5a5a5a;">10</div>
<div class="a btn" style="left:1282.5px;top:932.5px;width:196px;height:25.8px;"></div>
<div class="t" style="left:1180.2px;width:400px;text-align:center;top:939.00px;font-size:15px;line-height:15px;color:#111;">Toggle Quad View</div>
<div class="a " style="left:1274.75px;top:968.7px;width:211px;height:1px;background:#5e5e5e"></div>
<div class="a " style="left:1274.75px;top:969.7px;width:211px;height:1px;background:#7a7a7a"></div>
<svg class="a" style="left:1284.4px;top:979.0px;" width="10" height="10" viewBox="0 0 10 10"><path d="M0 0 L9.6 0 L4.8 10Z" fill="#1c1c1c"/></svg>
<div class="t" style="left:1302.3px;top:976.03px;font-size:16.5px;line-height:16.5px;color:#111;letter-spacing:0.05px">Shading</div>
<svg class="a" style="left:1465.4px;top:984px;" width="11" height="5" viewBox="0 0 11 5"><rect x="0.0" y="0" width="1.8" height="1.8" fill="#d8d8d8"/><rect x="2.8" y="0" width="1.8" height="1.8" fill="#d8d8d8"/><rect x="5.6" y="0" width="1.8" height="1.8" fill="#d8d8d8"/><rect x="8.399999999999999" y="0" width="1.8" height="1.8" fill="#d8d8d8"/><rect x="0.0" y="3" width="1.8" height="1.8" fill="#d8d8d8"/><rect x="2.8" y="3" width="1.8" height="1.8" fill="#d8d8d8"/><rect x="5.6" y="3" width="1.8" height="1.8" fill="#d8d8d8"/><rect x="8.399999999999999" y="3" width="1.8" height="1.8" fill="#d8d8d8"/></svg>
<div class="a chk" style="left:1286px;top:1013.75px;width:18.5px;height:18.2px;"></div>
<div class="t" style="left:1316px;top:1016.30px;font-size:15px;line-height:15px;color:#111;">Textured Solid</div>
<div class="a chk" style="left:1286px;top:1043px;width:18.5px;height:18.2px;"></div>
<svg class="a" style="left:1286px;top:1040px;" width="20" height="18" viewBox="0 0 20 18"><path d="M4 9.5 L8 13.5 L17 2" fill="none" stroke="#333" stroke-width="4" stroke-linecap="round"/><path d="M4 9.5 L8 13.5 L17 2" fill="none" stroke="#f0f0f0" stroke-width="2.4" stroke-linecap="round"/></svg>
<div class="t" style="left:1316px;top:1045.30px;font-size:15px;line-height:15px;color:#f2f2f2;">Matcap</div>
<div class="a " style="left:1282px;top:1068px;width:196.5px;height:30px;border-radius:7px;background:#555;border:1px solid #333"></div>
<div class="a " style="left:1302.25px;top:1070.6px;width:155px;height:20px;background:linear-gradient(90deg,#d8d8da,#cfcfd2 50%,#dadadc)"></div>
</div></div>
<svg class="a" style="left:1px;top:1098px;" width="16" height="22" viewBox="0 0 16 22"><path d="M0 9 L12 21 M0 14 L7 21 M0 4 L16 20" stroke="#8a8a8a" stroke-width="1"/><path d="M0 10 L11 21 M0 15 L6 21" stroke="#555" stroke-width="0.8"/></svg>
<div class="a " style="left:11.7px;top:1090.3px;width:41.599999999999994px;height:25.5px;border:1px solid #262626;border-radius:5px;background:linear-gradient(#555,#3c3c3c);"></div>
<svg class="a" style="left:18px;top:1093px;" width="20" height="20" viewBox="0 0 20 20"><path d="M10 1.5 L17.5 5 L17.5 14.5 L10 18.5 L2.5 14.5 L2.5 5Z" fill="#222"/><path d="M10 3 L16 5.8 L10 8.6 L4 5.8Z" fill="#f4f4f4"/><path d="M4 5.8 L10 8.6 L10 16.8 L4 13.8Z" fill="#e0e0e0"/><path d="M16 5.8 L10 8.6 L10 16.8 L16 13.8Z" fill="#8a8a8a"/></svg>
<svg class="a" style="left:41px;top:1095px;" width="8" height="16" viewBox="0 0 8 16"><path d="M4 1 L7.5 6.5 L0.5 6.5Z M0.5 9.5 L7.5 9.5 L4 15Z" fill="#d0d0d0"/></svg>
<div class="t" style="left:70.8px;top:1097.30px;font-size:15px;line-height:15px;color:#111;">View</div>
<div class="t" style="left:131.7px;top:1097.30px;font-size:15px;line-height:15px;color:#111;">Select</div>
<div class="t" style="left:201.7px;top:1097.30px;font-size:15px;line-height:15px;color:#111;">Add</div>
<div class="t" style="left:255.8px;top:1097.30px;font-size:15px;line-height:15px;color:#111;">Object</div>
<div class="a " style="left:319.2px;top:1090.3px;width:154.10000000000002px;height:25.5px;border:1px solid #262626;border-radius:5px;background:linear-gradient(#555,#3c3c3c);"></div>
<svg class="a" style="left:327px;top:1094px;" width="18" height="18" viewBox="0 0 18 18"><g transform="scale(1.000)"><path d="M9 1 L16.5 4.8 L16.5 13.2 L9 17 L1.5 13.2 L1.5 4.8Z" fill="#3a2a18"/><path d="M9 2.4 L15.2 5.5 L9 8.6 L2.8 5.5Z" fill="#f6d6a8"/><path d="M2.8 5.5 L9 8.6 L9 15.6 L2.8 12.5Z" fill="#e79a3c"/><path d="M15.2 5.5 L9 8.6 L9 15.6 L15.2 12.5Z" fill="#c8772a"/></g></svg>
<div class="t" style="left:350.8px;top:1097.30px;font-size:15px;line-height:15px;color:#f2f2f2;">Object Mode</div>
<svg class="a" style="left:460px;top:1095px;" width="8" height="16" viewBox="0 0 8 16"><path d="M4 1 L7.5 6.5 L0.5 6.5Z M0.5 9.5 L7.5 9.5 L4 15Z" fill="#d0d0d0"/></svg>
<div class="a " style="left:480.8px;top:1090.3px;width:41.69999999999999px;height:25.5px;border:1px solid #262626;border-radius:5px;background:linear-gradient(#555,#3c3c3c);"></div>
<svg class="a" style="left:487px;top:1094px;" width="19" height="19" viewBox="0 0 19 19"><defs><radialGradient id="sph" cx="0.35" cy="0.3" r="0.8"><stop offset="0" stop-color="#fff"/><stop offset="0.6" stop-color="#e6e6e6"/><stop offset="1" stop-color="#9a9a9a"/></radialGradient></defs><circle cx="9.5" cy="9.5" r="8.5" fill="url(#sph)"/></svg>
<svg class="a" style="left:510px;top:1095px;" width="8" height="16" viewBox="0 0 8 16"><path d="M4 1 L7.5 6.5 L0.5 6.5Z M0.5 9.5 L7.5 9.5 L4 15Z" fill="#d0d0d0"/></svg>
<div class="a " style="left:530px;top:1090.3px;width:43.5px;height:25.5px;border:1px solid #262626;border-radius:5px 0 0 5px;background:linear-gradient(#555,#3c3c3c);"></div>
<div class="a " style="left:572.5px;top:1090.3px;width:25.799999999999955px;height:25.5px;border:1px solid #262626;border-radius:0 5px 5px 0;background:linear-gradient(#a8a8a8,#8e8e8e);"></div>
<svg class="a" style="left:534px;top:1093px;" width="24" height="22" viewBox="0 0 24 22"><circle cx="8" cy="7" r="6" fill="#eee" stroke="#777" stroke-width="0.6"/><circle cx="14" cy="15" r="6" fill="#e0e0e0" stroke="#777" stroke-width="0.6"/><rect x="8" y="8" width="5" height="5" fill="none" stroke="#3a6ad0" stroke-width="1.8"/></svg>
<svg class="a" style="left:561px;top:1095px;" width="8" height="16" viewBox="0 0 8 16"><path d="M4 1 L7.5 6.5 L0.5 6.5Z M0.5 9.5 L7.5 9.5 L4 15Z" fill="#bdbdbd"/></svg>
<svg class="a" style="left:575px;top:1092px;" width="22" height="22" viewBox="0 0 22 22"><circle cx="5" cy="4" r="2" fill="none" stroke="#3c6cc8" stroke-width="1.4"/><circle cx="11" cy="4" r="2" fill="none" stroke="#3c6cc8" stroke-width="1.4"/><circle cx="17" cy="4" r="2" fill="none" stroke="#3c6cc8" stroke-width="1.4"/><path d="M2 14 L20 14 M2 14 L6 10 M2 14 L6 18 M20 14 L16 10 M20 14 L16 18" stroke="#333" stroke-width="3" stroke-linecap="round"/><path d="M2 14 L20 14 M2 14 L6 10 M2 14 L6 18 M20 14 L16 10 M20 14 L16 18" stroke="#f2f2f2" stroke-width="1.6" stroke-linecap="round"/></svg>
<div class="a " style="left:606.7px;top:1090.3px;width:25.799999999999955px;height:25.5px;border:1px solid #262626;border-radius:5px 0 0 5px;background:linear-gradient(#555,#3c3c3c);"></div>
<div class="a " style="left:632px;top:1090.3px;width:26.799999999999955px;height:25.5px;border:1px solid #262626;border-radius:0;background:linear-gradient(#6790d0,#4f78b8);"></div>
<div class="a " style="left:658.3px;top:1090.3px;width:27.700000000000045px;height:25.5px;border:1px solid #262626;border-radius:0;background:linear-gradient(#555,#3c3c3c);"></div>
<div class="a " style="left:685.5px;top:1090.3px;width:26.700000000000045px;height:25.5px;border:1px solid #262626;border-radius:0;background:linear-gradient(#555,#3c3c3c);"></div>
<div class="a " style="left:711.7px;top:1090.3px;width:99.09999999999991px;height:25.5px;border:1px solid #262626;border-radius:0 5px 5px 0;background:linear-gradient(#555,#3c3c3c);"></div>
<svg class="a" style="left:608px;top:1092px;" width="24" height="22" viewBox="0 0 24 22"><path d="M12 13 L12 2" stroke="#3a6ac8" stroke-width="3"/><path d="M12 13 L3 19" stroke="#d83a30" stroke-width="3"/><path d="M12 13 L21 19" stroke="#40c040" stroke-width="3"/><rect x="10.5" y="1" width="3" height="3" fill="#9ab8f0"/></svg>
<svg class="a" style="left:635px;top:1092px;" width="22" height="22" viewBox="0 0 22 22"><path d="M4 18 L16 6" stroke="#1e3e80" stroke-width="4.4" stroke-linecap="round"/><path d="M4 18 L16 6" stroke="#a8c8ff" stroke-width="2.4" stroke-linecap="round"/><path d="M10 4 L19 3 L18 12Z" fill="#a8c8ff" stroke="#1e3e80" stroke-width="1"/></svg>
<svg class="a" style="left:661px;top:1092px;" width="22" height="22" viewBox="0 0 22 22"><path d="M5 19 C5 11 9 5 19 4" fill="none" stroke="#2a3e68" stroke-width="4.2" stroke-linecap="round"/><path d="M5 19 C5 11 9 5 19 4" fill="none" stroke="#7090c8" stroke-width="2.4" stroke-linecap="round"/></svg>
<svg class="a" style="left:688px;top:1092px;" width="22" height="22" viewBox="0 0 22 22"><path d="M4 19 L13 10" stroke="#2a3e68" stroke-width="4.2" stroke-linecap="round"/><path d="M4 19 L13 10" stroke="#7090c8" stroke-width="2.4" stroke-linecap="round"/><rect x="11" y="3" width="8" height="8" fill="#7090c8" stroke="#2a3e68" stroke-width="1"/></svg>
<div class="t" style="left:722.5px;top:1097.30px;font-size:15px;line-height:15px;color:#f2f2f2;">Global</div>
<svg class="a" style="left:797px;top:1095px;" width="8" height="16" viewBox="0 0 8 16"><path d="M4 1 L7.5 6.5 L0.5 6.5Z M0.5 9.5 L7.5 9.5 L4 15Z" fill="#d0d0d0"/></svg>
<div class="a " style="left:818.3px;top:1090.3px;width:65.9px;height:25.5px;border:1px solid #333;border-radius:5px;background:#8c8c8c;overflow:hidden"></div>
<div class="a " style="left:831.4799999999999px;top:1090.3px;width:1px;height:25.5px;background:#444"></div>
<div class="a " style="left:844.66px;top:1090.3px;width:1px;height:25.5px;background:#444"></div>
<div class="a " style="left:857.8399999999999px;top:1090.3px;width:1px;height:25.5px;background:#444"></div>
<div class="a " style="left:871.02px;top:1090.3px;width:1px;height:25.5px;background:#444"></div>
<div class="a " style="left:818.3px;top:1103.05px;width:65.9px;height:1px;background:#444"></div>
<div class="a " style="left:891.7px;top:1090.3px;width:65.9px;height:25.5px;border:1px solid #333;border-radius:5px;background:#8c8c8c;overflow:hidden"></div>
<div class="a " style="left:904.88px;top:1090.3px;width:1px;height:25.5px;background:#444"></div>
<div class="a " style="left:918.0600000000001px;top:1090.3px;width:1px;height:25.5px;background:#444"></div>
<div class="a " style="left:931.24px;top:1090.3px;width:1px;height:25.5px;background:#444"></div>
<div class="a " style="left:944.4200000000001px;top:1090.3px;width:1px;height:25.5px;background:#444"></div>
<div class="a " style="left:891.7px;top:1103.05px;width:65.9px;height:1px;background:#444"></div>
<div class="a " style="left:819.3px;top:1091.3px;width:12.2px;height:11.7px;background:#727272;border-radius:4px 0 0 0"></div>
<svg class="a" style="left:821px;top:1092.5px;" width="9" height="9" viewBox="0 0 9 9"><circle cx="4.5" cy="4.5" r="3.4" fill="#f0a040" stroke="#5a3010" stroke-width="1"/></svg>
<svg class="a" style="left:834px;top:1092.5px;" width="9" height="9" viewBox="0 0 9 9"><circle cx="4.5" cy="4.5" r="3.4" fill="#8a8a8a" stroke="#666" stroke-width="1"/></svg>
<div class="a " style="left:965px;top:1090.3px;width:25.799999999999955px;height:25.5px;border:1px solid #262626;border-radius:5px;background:linear-gradient(#a8a8a8,#8e8e8e);"></div>
<svg class="a" style="left:967px;top:1093px;" width="22" height="20" viewBox="0 0 22 20"><rect x="2" y="2" width="12" height="13" rx="2" fill="#d8d8d8" stroke="#444" stroke-width="0.9"/><rect x="3" y="11" width="6" height="1.5" fill="#888"/><ellipse cx="16" cy="9" rx="2.6" ry="3.4" fill="none" stroke="#222" stroke-width="2.6"/><ellipse cx="16" cy="14.5" rx="2.6" ry="3.4" fill="none" stroke="#222" stroke-width="2.6"/><ellipse cx="16" cy="9" rx="2.6" ry="3.4" fill="none" stroke="#eee" stroke-width="1.3"/><ellipse cx="16" cy="14.5" rx="2.6" ry="3.4" fill="none" stroke="#eee" stroke-width="1.3"/></svg>
<div class="a " style="left:998.3px;top:1090.3px;width:25.90000000000009px;height:25.5px;border:1px solid #262626;border-radius:5px;background:linear-gradient(#a8a8a8,#8e8e8e);"></div>
<svg class="a" style="left:1003px;top:1094px;" width="17" height="17" viewBox="0 0 17 17"><circle cx="8.5" cy="8.5" r="6.8" fill="none" stroke="#777" stroke-width="2"/><circle cx="8.5" cy="8.5" r="3.5" fill="none" stroke="#777" stroke-width="1.5"/></svg>
<div class="a " style="left:1032.5px;top:1090.3px;width:24.700000000000045px;height:25.5px;border:1px solid #262626;border-radius:5px 0 0 5px;background:linear-gradient(#a8a8a8,#8e8e8e);"></div>
<div class="a " style="left:1056.7px;top:1090.3px;width:43.799999999999955px;height:25.5px;border:1px solid #262626;border-radius:0;background:linear-gradient(#555,#3c3c3c);"></div>
<div class="a " style="left:1100px;top:1090.3px;width:25.799999999999955px;height:25.5px;border:1px solid #262626;border-radius:0 5px 5px 0;background:linear-gradient(#a8a8a8,#8e8e8e);"></div>
<svg class="a" style="left:1035px;top:1093px;" width="20" height="20" viewBox="0 0 20 20"><g transform="rotate(45 10 10)"><path d="M5.5 3 L5.5 10.5 A4.5 4.5 0 0 0 14.5 10.5 L14.5 3" fill="none" stroke="#505050" stroke-width="4.6"/><path d="M5.5 3.5 L5.5 10.5 A4.5 4.5 0 0 0 14.5 10.5 L14.5 3.5" fill="none" stroke="#d4d4d4" stroke-width="2.8"/><path d="M5.5 3 L5.5 5.5 M14.5 3 L14.5 5.5" stroke="#f4f4f4" stroke-width="2.8"/></g></svg>
<svg class="a" style="left:1060px;top:1094px;" width="24" height="18" viewBox="0 0 24 18"><path d="M2 9 L22 9 M3 4 L3 14 M8 5 L8 13 M16 5 L16 13 M21 4 L21 14" stroke="#e0e0e0" stroke-width="1.2"/><rect x="10.5" y="1.5" width="3.5" height="15" rx="1.7" fill="#9cc8ff"/><rect x="9" y="0" width="6.5" height="18" rx="3" fill="#5aa0ff" opacity="0.35"/></svg>
<svg class="a" style="left:1087px;top:1095px;" width="8" height="16" viewBox="0 0 8 16"><path d="M4 1 L7.5 6.5 L0.5 6.5Z M0.5 9.5 L7.5 9.5 L4 15Z" fill="#bdbdbd"/></svg>
<svg class="a" style="left:1104px;top:1092px;" width="20" height="21" viewBox="0 0 20 21"><path d="M3 11 L19 11 M3 16 L19 16 M8 6 L8 20 M14 8 L14 20" stroke="#eee" stroke-width="1.4"/><circle cx="7" cy="6" r="4.5" fill="#c8e0ff" stroke="#3a6ac8" stroke-width="1.5"/><circle cx="7" cy="6" r="2" fill="#3a6ac8"/></svg>
<div class="a " style="left:1135px;top:1090.3px;width:24.700000000000045px;height:25.5px;border:1px solid #262626;border-radius:5px 0 0 5px;background:linear-gradient(#a8a8a8,#8e8e8e);"></div>
<div class="a " style="left:1159.2px;top:1090.3px;width:26.59999999999991px;height:25.5px;border:1px solid #262626;border-radius:0 5px 5px 0;background:linear-gradient(#a8a8a8,#8e8e8e);"></div>
<svg class="a" style="left:1137px;top:1092px;" width="22" height="21" viewBox="0 0 22 21"><rect x="2" y="6" width="16" height="12" rx="1.5" fill="#bdbdbd" stroke="#222" stroke-width="1.2"/><rect x="4" y="4" width="4" height="3" fill="#ddd" stroke="#222" stroke-width="1"/><circle cx="10.5" cy="12" r="4.2" fill="#222"/><circle cx="10.5" cy="12" r="3" fill="#e0a8b8"/><circle cx="10.5" cy="12" r="2" fill="#3a1a28"/><path d="M17 1 L18 4 L21 5 L18 6 L17 9 L16 6 L13 5 L16 4Z" fill="#fff4a0"/></svg>
<svg class="a" style="left:1161px;top:1092px;" width="24" height="22" viewBox="0 0 24 22"><rect x="3" y="10" width="17" height="10" fill="#555" stroke="#222" stroke-width="1"/><path d="M3 9 L19 3 L20 7 L4 13Z" fill="#eee" stroke="#222" stroke-width="1"/><path d="M7 8 L9 11 M12 6 L14 9 M16 5 L18 8" stroke="#222" stroke-width="1.5"/><rect x="2" y="10" width="3" height="6" fill="#5a8ad8"/><path d="M6 14 L18 14 M6 17 L18 17" stroke="#999" stroke-width="1"/></svg>
<div class="a " style="left:1px;top:1122px;width:1510px;height:7.5px;background:#454545"></div>
<svg class="a" style="left:1px;top:1122px;" width="1510" height="7" viewBox="0 0 1510 7"><rect x="5.0" y="1" width="1" height="4" fill="#5a5a5a"/><rect x="22.9" y="1" width="1" height="4" fill="#5a5a5a"/><rect x="40.8" y="1" width="1" height="4" fill="#5a5a5a"/><rect x="58.7" y="1" width="1" height="4" fill="#5a5a5a"/><rect x="76.6" y="1" width="1" height="4" fill="#5a5a5a"/><rect x="94.5" y="1" width="1" height="4" fill="#5a5a5a"/><rect x="112.4" y="1" width="1" height="4" fill="#5a5a5a"/><rect x="130.3" y="1" width="1" height="4" fill="#5a5a5a"/><rect x="148.2" y="1" width="1" height="4" fill="#5a5a5a"/><rect x="166.1" y="1" width="1" height="4" fill="#5a5a5a"/><rect x="184.0" y="1" width="1" height="4" fill="#5a5a5a"/><rect x="201.9" y="1" width="1" height="4" fill="#5a5a5a"/><rect x="219.8" y="1" width="1" height="4" fill="#5a5a5a"/><rect x="237.7" y="1" width="1" height="4" fill="#5a5a5a"/><rect x="255.6" y="1" width="1" height="4" fill="#5a5a5a"/><rect x="273.5" y="1" width="1" height="4" fill="#5a5a5a"/><rect x="291.4" y="1" width="1" height="4" fill="#5a5a5a"/><rect x="309.3" y="1" width="1" height="4" fill="#5a5a5a"/><rect x="327.2" y="1" width="1" height="4" fill="#5a5a5a"/><rect x="345.1" y="1" width="1" height="4" fill="#5a5a5a"/><rect x="363.0" y="1" width="1" height="4" fill="#5a5a5a"/><rect x="380.9" y="1" width="1" height="4" fill="#5a5a5a"/><rect x="398.8" y="1" width="1" height="4" fill="#5a5a5a"/><rect x="416.7" y="1" width="1" height="4" fill="#5a5a5a"/><rect x="434.6" y="1" width="1" height="4" fill="#5a5a5a"/><rect x="452.5" y="1" width="1" height="4" fill="#5a5a5a"/><rect x="470.4" y="1" width="1" height="4" fill="#5a5a5a"/><rect x="488.3" y="1" width="1" height="4" fill="#5a5a5a"/><rect x="506.2" y="1" width="1" height="4" fill="#5a5a5a"/><rect x="524.1" y="1" width="1" height="4" fill="#5a5a5a"/><rect x="542.0" y="1" width="1" height="4" fill="#5a5a5a"/><rect x="559.9" y="1" width="1" height="4" fill="#5a5a5a"/><rect x="577.8" y="1" width="1" height="4" fill="#5a5a5a"/><rect x="595.7" y="1" width="1" height="4" fill="#5a5a5a"/><rect x="613.6" y="1" width="1" height="4" fill="#5a5a5a"/><rect x="631.5" y="1" width="1" height="4" fill="#5a5a5a"/><rect x="649.4" y="1" width="1" height="4" fill="#5a5a5a"/><rect x="667.3" y="1" width="1" height="4" fill="#5a5a5a"/><rect x="685.2" y="1" width="1" height="4" fill="#5a5a5a"/><rect x="703.1" y="1" width="1" height="4" fill="#5a5a5a"/><rect x="721.0" y="1" width="1" height="4" fill="#5a5a5a"/><rect x="738.9" y="1" width="1" height="4" fill="#5a5a5a"/><rect x="756.8" y="1" width="1" height="4" fill="#5a5a5a"/><rect x="774.7" y="1" width="1" height="4" fill="#5a5a5a"/><rect x="792.6" y="1" width="1" height="4" fill="#5a5a5a"/><rect x="810.5" y="1" width="1" height="4" fill="#5a5a5a"/><rect x="828.4" y="1" width="1" height="4" fill="#5a5a5a"/><rect x="846.3" y="1" width="1" height="4" fill="#5a5a5a"/><rect x="864.2" y="1" width="1" height="4" fill="#5a5a5a"/><rect x="882.1" y="1" width="1" height="4" fill="#5a5a5a"/><rect x="900.0" y="1" width="1" height="4" fill="#5a5a5a"/><rect x="917.9" y="1" width="1" height="4" fill="#5a5a5a"/><rect x="935.8" y="1" width="1" height="4" fill="#5a5a5a"/><rect x="953.7" y="1" width="1" height="4" fill="#5a5a5a"/><rect x="971.6" y="1" width="1" height="4" fill="#5a5a5a"/><rect x="989.5" y="1" width="1" height="4" fill="#5a5a5a"/><rect x="1007.4" y="1" width="1" height="4" fill="#5a5a5a"/><rect x="1025.3" y="1" width="1" height="4" fill="#5a5a5a"/><rect x="1043.2" y="1" width="1" height="4" fill="#5a5a5a"/><rect x="1061.1" y="1" width="1" height="4" fill="#5a5a5a"/><rect x="1079.0" y="1" width="1" height="4" fill="#5a5a5a"/><rect x="1096.9" y="1" width="1" height="4" fill="#5a5a5a"/><rect x="1114.8" y="1" width="1" height="4" fill="#5a5a5a"/><rect x="1132.7" y="1" width="1" height="4" fill="#5a5a5a"/><rect x="1150.6" y="1" width="1" height="4" fill="#5a5a5a"/><rect x="1168.5" y="1" width="1" height="4" fill="#5a5a5a"/><rect x="1186.4" y="1" width="1" height="4" fill="#5a5a5a"/><rect x="1204.3" y="1" width="1" height="4" fill="#5a5a5a"/><rect x="1222.2" y="1" width="1" height="4" fill="#5a5a5a"/><rect x="1240.1" y="1" width="1" height="4" fill="#5a5a5a"/><rect x="1258.0" y="1" width="1" height="4" fill="#5a5a5a"/><rect x="1275.9" y="1" width="1" height="4" fill="#5a5a5a"/><rect x="1293.8" y="1" width="1" height="4" fill="#5a5a5a"/><rect x="1311.7" y="1" width="1" height="4" fill="#5a5a5a"/><rect x="1329.6" y="1" width="1" height="4" fill="#5a5a5a"/><rect x="1347.5" y="1" width="1" height="4" fill="#5a5a5a"/><rect x="1365.4" y="1" width="1" height="4" fill="#5a5a5a"/><rect x="1383.3" y="1" width="1" height="4" fill="#5a5a5a"/><rect x="1401.2" y="1" width="1" height="4" fill="#5a5a5a"/><rect x="1419.1" y="1" width="1" height="4" fill="#5a5a5a"/><rect x="1437.0" y="1" width="1" height="4" fill="#5a5a5a"/><rect x="1454.9" y="1" width="1" height="4" fill="#5a5a5a"/><rect x="1472.8" y="1" width="1" height="4" fill="#5a5a5a"/><rect x="1490.7" y="1" width="1" height="4" fill="#5a5a5a"/></svg>
<div class="a " style="left:5px;top:1129.3px;width:1477px;height:16px;border-radius:8px;background:linear-gradient(#b0b0b0,#9c9c9c);border:1px solid #3a3a3a"></div>
<svg class="a" style="left:1488px;top:1128px;" width="22" height="12" viewBox="0 0 22 12"><circle cx="9" cy="8" r="6.5" fill="#9a9a9a" stroke="#444" stroke-width="1"/><path d="M8 0 L21 12 M12 0 L21 8 M16 0 L21 4" stroke="#8a8a8a" stroke-width="1"/></svg>
<div style="position:absolute;left:1513px;top:82px;width:407px;height:187px;overflow:hidden"><div style="position:absolute;left:-1513px;top:-82px;width:1920px;height:1200px">
<div class="a " style="left:1525.6px;top:87.2px;width:41.9px;height:25.2px;border:1px solid #262626;border-radius:5px;background:linear-gradient(#555,#3c3c3c)"></div>
<svg class="a" style="left:1530px;top:90px;" width="22" height="20" viewBox="0 0 22 20"><rect x="1" y="1" width="8" height="3" rx="1" fill="#f0b060"/><path d="M3.5 4 L3.5 16 M3.5 10 L7 10 M3.5 16 L7 16" stroke="#ccc" stroke-width="1"/><rect x="7" y="8.5" width="8" height="3" rx="1" fill="#f4f4f4"/><rect x="7" y="14.5" width="8" height="3" rx="1" fill="#f4f4f4"/></svg>
<svg class="a" style="left:1555px;top:92px;" width="8" height="16" viewBox="0 0 8 16"><path d="M4 1 L7.5 6.5 L0.5 6.5Z M0.5 9.5 L7.5 9.5 L4 15Z" fill="#d0d0d0"/></svg>
<div class="t" style="left:1585.2px;top:93.30px;font-size:15px;line-height:15px;color:#111;">View</div>
<div class="t" style="left:1646px;top:93.30px;font-size:15px;line-height:15px;color:#111;">Search</div>
<div class="a " style="left:1712px;top:87.7px;width:166.8px;height:24.7px;border:1px solid #262626;border-radius:5px;background:linear-gradient(#555,#3c3c3c)"></div>
<div class="t" style="left:1721.8px;top:93.90px;font-size:15px;line-height:15px;color:#f2f2f2;">All Scenes</div>
<svg class="a" style="left:1866px;top:92px;" width="8" height="16" viewBox="0 0 8 16"><path d="M4 1 L7.5 6.5 L0.5 6.5Z M0.5 9.5 L7.5 9.5 L4 15Z" fill="#d0d0d0"/></svg>
<div class="a " style="left:1886.8px;top:87.7px;width:40px;height:24.7px;border:1px solid #333;border-radius:5px;background:linear-gradient(#b8b8b8,#a4a4a4)"></div>
<svg class="a" style="left:1889px;top:89px;" width="22" height="22" viewBox="0 0 22 22"><path d="M3 19 L9 13" stroke="#4a2a10" stroke-width="3.6" stroke-linecap="round"/><path d="M3 19 L9 13" stroke="#d08040" stroke-width="2" stroke-linecap="round"/><circle cx="13" cy="9" r="6.3" fill="#e8e0e0" stroke="#222" stroke-width="1.4"/><circle cx="11.5" cy="7.5" r="1.8" fill="#fff"/></svg>
<svg class="a" style="left:1900px;top:82px;" width="20" height="16" viewBox="0 0 20 16"><path d="M4 0 L20 15 M9 0 L20 10 M14 0 L20 5" stroke="#8a8a8a" stroke-width="1.2"/></svg>
<div class="a " style="left:1513px;top:116.4px;width:407px;height:25.310000000000002px;background:#838383"></div>
<div class="a " style="left:1513px;top:141.71px;width:407px;height:26.620000000000005px;background:#898989"></div>
<div class="a " style="left:1513px;top:168.33px;width:407px;height:26.620000000000005px;background:#7c7c7c"></div>
<div class="a " style="left:1513px;top:194.95000000000002px;width:407px;height:26.619999999999976px;background:#838383"></div>
<div class="a " style="left:1513px;top:221.57px;width:407px;height:26.620000000000005px;background:#898989"></div>
<div class="a " style="left:1513px;top:248.19px;width:407px;height:26.620000000000005px;background:#838383"></div>
<div class="a " style="left:1817.5px;top:116.4px;width:1px;height:160px;background:#767676"></div>
<div class="a " style="left:1844.4px;top:116.4px;width:1px;height:160px;background:#767676"></div>
<div class="a " style="left:1871.3px;top:116.4px;width:1px;height:160px;background:#767676"></div>
<div class="a " style="left:1553.3px;top:116.4px;width:1px;height:160px;background:#5a5a5a"></div>
<div class="a " style="left:1559px;top:127.9px;width:13px;height:1px;background:#5a5a5a"></div>
<svg class="a" style="left:1548px;top:122.4px;" width="12" height="12" viewBox="0 0 12 12"><circle cx="6" cy="6" r="5" fill="#d8d8d8" stroke="#2a2a2a" stroke-width="1"/><path d="M6 3 L6 9 M3 6 L9 6" stroke="#222" stroke-width="1.6"/></svg>
<svg class="a" style="left:1572.5px;top:119.4px;" width="18" height="18" viewBox="0 0 18 18"><path d="M2.5 3 L15.5 3 L9 15.5Z" fill="none" stroke="#40200a" stroke-width="3.6" stroke-linejoin="round"/><path d="M2.5 3 L15.5 3 L9 15.5Z" fill="none" stroke="#e4983e" stroke-width="2.2" stroke-linejoin="round"/><circle cx="2.5" cy="3" r="1.3" fill="#fff"/><circle cx="15.5" cy="3" r="1.3" fill="#fff"/><circle cx="9" cy="15.5" r="1.3" fill="#fff"/></svg>
<div class="t" style="left:1598.4px;top:121.40px;font-size:15px;line-height:15px;color:#111;">Plane.006</div>
<div class="a " style="left:1683.2px;top:122.4px;width:2px;height:13px;background:#444"></div>
<svg class="a" style="left:1699.2px;top:119.4px;" width="18" height="18" viewBox="0 0 18 18"><path d="M3 3.5 L15 3.5 L9 15Z" fill="none" stroke="#555" stroke-width="2.2"/><path d="M3 3.5 L15 3.5 L9 15Z" fill="none" stroke="#d4d4d4" stroke-width="1"/><circle cx="3" cy="3.5" r="1.8" fill="#d4d4d4" stroke="#555" stroke-width="0.8"/><circle cx="15" cy="3.5" r="1.8" fill="#d4d4d4" stroke="#555" stroke-width="0.8"/><circle cx="9" cy="15" r="1.8" fill="#d4d4d4" stroke="#555" stroke-width="0.8"/></svg>
<svg class="a" style="left:1725px;top:118.4px;" width="20" height="18" viewBox="0 0 20 18"><path d="M3 15 L10 8" stroke="#2a3a60" stroke-width="4.2" stroke-linecap="round"/><path d="M3 15 L10 8" stroke="#8fb0e8" stroke-width="2.6" stroke-linecap="round"/><path d="M9 5 C9 2.5 11.5 1 14 1.8 L12 4 L14 6 L16.2 4 C17 6.5 15.5 9 13 9 C11 9 9 7.5 9 5Z" fill="#8fb0e8" stroke="#2a3a60" stroke-width="0.8"/></svg>
<svg class="a" style="left:1822px;top:120.4px;" width="18" height="16" viewBox="0 0 18 16"><path d="M2 7 C5 11.5 13 11.5 16 7 C13 9 5 9 2 7Z" fill="#6e6e6e" stroke="#7a7a7a" stroke-width="0.8"/></svg>
<svg class="a" style="left:1851px;top:119.4px;" width="16" height="18" viewBox="0 0 16 18"><path d="M3 1 L3 14 L6.2 11 L8.6 16.5 L11 15.5 L8.7 10.2 L13 10Z" fill="#f2f2f2" stroke="#111" stroke-width="1.3" stroke-linejoin="round"/></svg>
<svg class="a" style="left:1874px;top:118.9px;" width="18" height="18" viewBox="0 0 18 18"><g opacity="1.0"><rect x="1.5" y="4.5" width="15" height="11" rx="1.5" fill="#e8e8e8" stroke="#222" stroke-width="1.2"/><rect x="3" y="2" width="4" height="3" fill="#e8e8e8" stroke="#222" stroke-width="1"/><circle cx="9.5" cy="10" r="3.9" fill="#1e1e1e"/><circle cx="9.5" cy="10" r="2.8" fill="#e8b8c4"/><circle cx="9.5" cy="10" r="2" fill="#4a2030"/></g></svg>
<div class="a " style="left:1559px;top:154.52px;width:13px;height:1px;background:#5a5a5a"></div>
<svg class="a" style="left:1548px;top:149.02px;" width="12" height="12" viewBox="0 0 12 12"><circle cx="6" cy="6" r="5" fill="#d8d8d8" stroke="#2a2a2a" stroke-width="1"/><path d="M6 3 L6 9 M3 6 L9 6" stroke="#222" stroke-width="1.6"/></svg>
<svg class="a" style="left:1572.5px;top:146.02px;" width="18" height="18" viewBox="0 0 18 18"><path d="M2.5 3 L15.5 3 L9 15.5Z" fill="none" stroke="#40200a" stroke-width="3.6" stroke-linejoin="round"/><path d="M2.5 3 L15.5 3 L9 15.5Z" fill="none" stroke="#e4983e" stroke-width="2.2" stroke-linejoin="round"/><circle cx="2.5" cy="3" r="1.3" fill="#fff"/><circle cx="15.5" cy="3" r="1.3" fill="#fff"/><circle cx="9" cy="15.5" r="1.3" fill="#fff"/></svg>
<div class="t" style="left:1598.4px;top:148.02px;font-size:15px;line-height:15px;color:#111;">shoe_V1</div>
<div class="a " style="left:1672px;top:149.02px;width:2px;height:13px;background:#444"></div>
<svg class="a" style="left:1688px;top:146.02px;" width="18" height="18" viewBox="0 0 18 18"><path d="M3 3.5 L15 3.5 L9 15Z" fill="none" stroke="#555" stroke-width="2.2"/><path d="M3 3.5 L15 3.5 L9 15Z" fill="none" stroke="#d4d4d4" stroke-width="1"/><circle cx="3" cy="3.5" r="1.8" fill="#d4d4d4" stroke="#555" stroke-width="0.8"/><circle cx="15" cy="3.5" r="1.8" fill="#d4d4d4" stroke="#555" stroke-width="0.8"/><circle cx="9" cy="15" r="1.8" fill="#d4d4d4" stroke="#555" stroke-width="0.8"/></svg>
<svg class="a" style="left:1714px;top:145.02px;" width="20" height="18" viewBox="0 0 20 18"><path d="M3 15 L10 8" stroke="#2a3a60" stroke-width="4.2" stroke-linecap="round"/><path d="M3 15 L10 8" stroke="#8fb0e8" stroke-width="2.6" stroke-linecap="round"/><path d="M9 5 C9 2.5 11.5 1 14 1.8 L12 4 L14 6 L16.2 4 C17 6.5 15.5 9 13 9 C11 9 9 7.5 9 5Z" fill="#8fb0e8" stroke="#2a3a60" stroke-width="0.8"/></svg>
<svg class="a" style="left:1822px;top:147.02px;" width="18" height="16" viewBox="0 0 18 16"><path d="M2 7 C5 11.5 13 11.5 16 7 C13 9 5 9 2 7Z" fill="#6e6e6e" stroke="#7a7a7a" stroke-width="0.8"/></svg>
<svg class="a" style="left:1851px;top:146.02px;" width="16" height="18" viewBox="0 0 16 18"><path d="M3 1 L3 14 L6.2 11 L8.6 16.5 L11 15.5 L8.7 10.2 L13 10Z" fill="#f2f2f2" stroke="#111" stroke-width="1.3" stroke-linejoin="round"/></svg>
<svg class="a" style="left:1874px;top:145.52px;" width="18" height="18" viewBox="0 0 18 18"><g opacity="0.35"><rect x="1.5" y="4.5" width="15" height="11" rx="1.5" fill="#e8e8e8" stroke="#222" stroke-width="1.2"/><rect x="3" y="2" width="4" height="3" fill="#e8e8e8" stroke="#222" stroke-width="1"/><circle cx="9.5" cy="10" r="3.9" fill="#1e1e1e"/><circle cx="9.5" cy="10" r="2.8" fill="#e8b8c4"/><circle cx="9.5" cy="10" r="2" fill="#4a2030"/></g></svg>
<div class="a " style="left:1559px;top:181.14000000000001px;width:13px;height:1px;background:#5a5a5a"></div>
<svg class="a" style="left:1548px;top:175.64000000000001px;" width="12" height="12" viewBox="0 0 12 12"><circle cx="6" cy="6" r="5" fill="#d8d8d8" stroke="#2a2a2a" stroke-width="1"/><path d="M6 3 L6 9 M3 6 L9 6" stroke="#222" stroke-width="1.6"/></svg>
<svg class="a" style="left:1572.5px;top:172.64000000000001px;" width="18" height="18" viewBox="0 0 18 18"><path d="M2.5 3 L15.5 3 L9 15.5Z" fill="none" stroke="#40200a" stroke-width="3.6" stroke-linejoin="round"/><path d="M2.5 3 L15.5 3 L9 15.5Z" fill="none" stroke="#e4983e" stroke-width="2.2" stroke-linejoin="round"/><circle cx="2.5" cy="3" r="1.3" fill="#fff"/><circle cx="15.5" cy="3" r="1.3" fill="#fff"/><circle cx="9" cy="15.5" r="1.3" fill="#fff"/></svg>
<div class="t" style="left:1598.4px;top:174.64px;font-size:15px;line-height:15px;color:#f4f4f4;">shoe_test</div>
<div class="a " style="left:1680px;top:175.64000000000001px;width:2px;height:13px;background:#444"></div>
<svg class="a" style="left:1696px;top:172.64000000000001px;" width="18" height="18" viewBox="0 0 18 18"><path d="M3 3.5 L15 3.5 L9 15Z" fill="none" stroke="#555" stroke-width="2.2"/><path d="M3 3.5 L15 3.5 L9 15Z" fill="none" stroke="#d4d4d4" stroke-width="1"/><circle cx="3" cy="3.5" r="1.8" fill="#d4d4d4" stroke="#555" stroke-width="0.8"/><circle cx="15" cy="3.5" r="1.8" fill="#d4d4d4" stroke="#555" stroke-width="0.8"/><circle cx="9" cy="15" r="1.8" fill="#d4d4d4" stroke="#555" stroke-width="0.8"/></svg>
<svg class="a" style="left:1822px;top:173.64000000000001px;" width="18" height="16" viewBox="0 0 18 16"><g opacity="1.0"><path d="M1 8 C4 3 14 3 17 8 C14 13 4 13 1 8Z" fill="#f4f4f4" stroke="#2a2a2a" stroke-width="1.1"/><circle cx="9" cy="8" r="3.2" fill="#8a8a8a"/><circle cx="9" cy="8" r="1.3" fill="#111"/></g></svg>
<svg class="a" style="left:1851px;top:172.64000000000001px;" width="16" height="18" viewBox="0 0 16 18"><path d="M3 1 L3 14 L6.2 11 L8.6 16.5 L11 15.5 L8.7 10.2 L13 10Z" fill="#f2f2f2" stroke="#111" stroke-width="1.3" stroke-linejoin="round"/></svg>
<svg class="a" style="left:1874px;top:172.14000000000001px;" width="18" height="18" viewBox="0 0 18 18"><g opacity="1.0"><rect x="1.5" y="4.5" width="15" height="11" rx="1.5" fill="#e8e8e8" stroke="#222" stroke-width="1.2"/><rect x="3" y="2" width="4" height="3" fill="#e8e8e8" stroke="#222" stroke-width="1"/><circle cx="9.5" cy="10" r="3.9" fill="#1e1e1e"/><circle cx="9.5" cy="10" r="2.8" fill="#e8b8c4"/><circle cx="9.5" cy="10" r="2" fill="#4a2030"/></g></svg>
<div class="a " style="left:1559px;top:207.76px;width:13px;height:1px;background:#5a5a5a"></div>
<svg class="a" style="left:1548px;top:202.26px;" width="12" height="12" viewBox="0 0 12 12"><circle cx="6" cy="6" r="5" fill="#d8d8d8" stroke="#2a2a2a" stroke-width="1"/><path d="M6 3 L6 9 M3 6 L9 6" stroke="#222" stroke-width="1.6"/></svg>
<svg class="a" style="left:1572.5px;top:199.26px;" width="18" height="18" viewBox="0 0 18 18"><path d="M2.5 3 L15.5 3 L9 15.5Z" fill="none" stroke="#40200a" stroke-width="3.6" stroke-linejoin="round"/><path d="M2.5 3 L15.5 3 L9 15.5Z" fill="none" stroke="#e4983e" stroke-width="2.2" stroke-linejoin="round"/><circle cx="2.5" cy="3" r="1.3" fill="#fff"/><circle cx="15.5" cy="3" r="1.3" fill="#fff"/><circle cx="9" cy="15.5" r="1.3" fill="#fff"/></svg>
<div class="t" style="left:1598.4px;top:201.26px;font-size:15px;line-height:15px;color:#111;">shoe_test_cell.001</div>
<div class="a " style="left:1744px;top:202.26px;width:2px;height:13px;background:#444"></div>
<svg class="a" style="left:1760px;top:199.26px;" width="18" height="18" viewBox="0 0 18 18"><path d="M3 3.5 L15 3.5 L9 15Z" fill="none" stroke="#555" stroke-width="2.2"/><path d="M3 3.5 L15 3.5 L9 15Z" fill="none" stroke="#d4d4d4" stroke-width="1"/><circle cx="3" cy="3.5" r="1.8" fill="#d4d4d4" stroke="#555" stroke-width="0.8"/><circle cx="15" cy="3.5" r="1.8" fill="#d4d4d4" stroke="#555" stroke-width="0.8"/><circle cx="9" cy="15" r="1.8" fill="#d4d4d4" stroke="#555" stroke-width="0.8"/></svg>
<svg class="a" style="left:1822px;top:200.26px;" width="18" height="16" viewBox="0 0 18 16"><g opacity="1.0"><path d="M1 8 C4 3 14 3 17 8 C14 13 4 13 1 8Z" fill="#f4f4f4" stroke="#2a2a2a" stroke-width="1.1"/><circle cx="9" cy="8" r="3.2" fill="#8a8a8a"/><circle cx="9" cy="8" r="1.3" fill="#111"/></g></svg>
<svg class="a" style="left:1851px;top:199.26px;" width="16" height="18" viewBox="0 0 16 18"><path d="M3 1 L3 14 L6.2 11 L8.6 16.5 L11 15.5 L8.7 10.2 L13 10Z" fill="#f2f2f2" stroke="#111" stroke-width="1.3" stroke-linejoin="round"/></svg>
<svg class="a" style="left:1874px;top:198.76px;" width="18" height="18" viewBox="0 0 18 18"><g opacity="1.0"><rect x="1.5" y="4.5" width="15" height="11" rx="1.5" fill="#e8e8e8" stroke="#222" stroke-width="1.2"/><rect x="3" y="2" width="4" height="3" fill="#e8e8e8" stroke="#222" stroke-width="1"/><circle cx="9.5" cy="10" r="3.9" fill="#1e1e1e"/><circle cx="9.5" cy="10" r="2.8" fill="#e8b8c4"/><circle cx="9.5" cy="10" r="2" fill="#4a2030"/></g></svg>
<div class="a " style="left:1559px;top:234.38px;width:13px;height:1px;background:#5a5a5a"></div>
<svg class="a" style="left:1548px;top:228.88px;" width="12" height="12" viewBox="0 0 12 12"><circle cx="6" cy="6" r="5" fill="#d8d8d8" stroke="#2a2a2a" stroke-width="1"/><path d="M6 3 L6 9 M3 6 L9 6" stroke="#222" stroke-width="1.6"/></svg>
<svg class="a" style="left:1572.5px;top:225.88px;" width="18" height="18" viewBox="0 0 18 18"><path d="M2.5 3 L15.5 3 L9 15.5Z" fill="none" stroke="#40200a" stroke-width="3.6" stroke-linejoin="round"/><path d="M2.5 3 L15.5 3 L9 15.5Z" fill="none" stroke="#e4983e" stroke-width="2.2" stroke-linejoin="round"/><circle cx="2.5" cy="3" r="1.3" fill="#fff"/><circle cx="15.5" cy="3" r="1.3" fill="#fff"/><circle cx="9" cy="15.5" r="1.3" fill="#fff"/></svg>
<div class="t" style="left:1598.4px;top:227.88px;font-size:15px;line-height:15px;color:#111;">shoe_test_cell.002</div>
<div class="a " style="left:1744px;top:228.88px;width:2px;height:13px;background:#444"></div>
<svg class="a" style="left:1760px;top:225.88px;" width="18" height="18" viewBox="0 0 18 18"><path d="M3 3.5 L15 3.5 L9 15Z" fill="none" stroke="#555" stroke-width="2.2"/><path d="M3 3.5 L15 3.5 L9 15Z" fill="none" stroke="#d4d4d4" stroke-width="1"/><circle cx="3" cy="3.5" r="1.8" fill="#d4d4d4" stroke="#555" stroke-width="0.8"/><circle cx="15" cy="3.5" r="1.8" fill="#d4d4d4" stroke="#555" stroke-width="0.8"/><circle cx="9" cy="15" r="1.8" fill="#d4d4d4" stroke="#555" stroke-width="0.8"/></svg>
<svg class="a" style="left:1822px;top:226.88px;" width="18" height="16" viewBox="0 0 18 16"><g opacity="1.0"><path d="M1 8 C4 3 14 3 17 8 C14 13 4 13 1 8Z" fill="#f4f4f4" stroke="#2a2a2a" stroke-width="1.1"/><circle cx="9" cy="8" r="3.2" fill="#8a8a8a"/><circle cx="9" cy="8" r="1.3" fill="#111"/></g></svg>
<svg class="a" style="left:1851px;top:225.88px;" width="16" height="18" viewBox="0 0 16 18"><path d="M3 1 L3 14 L6.2 11 L8.6 16.5 L11 15.5 L8.7 10.2 L13 10Z" fill="#f2f2f2" stroke="#111" stroke-width="1.3" stroke-linejoin="round"/></svg>
<svg class="a" style="left:1874px;top:225.38px;" width="18" height="18" viewBox="0 0 18 18"><g opacity="1.0"><rect x="1.5" y="4.5" width="15" height="11" rx="1.5" fill="#e8e8e8" stroke="#222" stroke-width="1.2"/><rect x="3" y="2" width="4" height="3" fill="#e8e8e8" stroke="#222" stroke-width="1"/><circle cx="9.5" cy="10" r="3.9" fill="#1e1e1e"/><circle cx="9.5" cy="10" r="2.8" fill="#e8b8c4"/><circle cx="9.5" cy="10" r="2" fill="#4a2030"/></g></svg>
<div class="a " style="left:1559px;top:261.0px;width:13px;height:1px;background:#5a5a5a"></div>
<svg class="a" style="left:1548px;top:255.5px;" width="12" height="12" viewBox="0 0 12 12"><circle cx="6" cy="6" r="5" fill="#d8d8d8" stroke="#2a2a2a" stroke-width="1"/><path d="M6 3 L6 9 M3 6 L9 6" stroke="#222" stroke-width="1.6"/></svg>
<svg class="a" style="left:1572.5px;top:252.5px;" width="18" height="18" viewBox="0 0 18 18"><path d="M2.5 3 L15.5 3 L9 15.5Z" fill="none" stroke="#40200a" stroke-width="3.6" stroke-linejoin="round"/><path d="M2.5 3 L15.5 3 L9 15.5Z" fill="none" stroke="#e4983e" stroke-width="2.2" stroke-linejoin="round"/><circle cx="2.5" cy="3" r="1.3" fill="#fff"/><circle cx="15.5" cy="3" r="1.3" fill="#fff"/><circle cx="9" cy="15.5" r="1.3" fill="#fff"/></svg>
<div class="t" style="left:1598.4px;top:254.50px;font-size:15px;line-height:15px;color:#111;">shoe_test_cell.003</div>
<div class="a " style="left:1744px;top:255.5px;width:2px;height:13px;background:#444"></div>
<svg class="a" style="left:1760px;top:252.5px;" width="18" height="18" viewBox="0 0 18 18"><path d="M3 3.5 L15 3.5 L9 15Z" fill="none" stroke="#555" stroke-width="2.2"/><path d="M3 3.5 L15 3.5 L9 15Z" fill="none" stroke="#d4d4d4" stroke-width="1"/><circle cx="3" cy="3.5" r="1.8" fill="#d4d4d4" stroke="#555" stroke-width="0.8"/><circle cx="15" cy="3.5" r="1.8" fill="#d4d4d4" stroke="#555" stroke-width="0.8"/><circle cx="9" cy="15" r="1.8" fill="#d4d4d4" stroke="#555" stroke-width="0.8"/></svg>
<svg class="a" style="left:1822px;top:253.5px;" width="18" height="16" viewBox="0 0 18 16"><g opacity="1.0"><path d="M1 8 C4 3 14 3 17 8 C14 13 4 13 1 8Z" fill="#f4f4f4" stroke="#2a2a2a" stroke-width="1.1"/><circle cx="9" cy="8" r="3.2" fill="#8a8a8a"/><circle cx="9" cy="8" r="1.3" fill="#111"/></g></svg>
<svg class="a" style="left:1851px;top:252.5px;" width="16" height="18" viewBox="0 0 16 18"><path d="M3 1 L3 14 L6.2 11 L8.6 16.5 L11 15.5 L8.7 10.2 L13 10Z" fill="#f2f2f2" stroke="#111" stroke-width="1.3" stroke-linejoin="round"/></svg>
<svg class="a" style="left:1874px;top:252.0px;" width="18" height="18" viewBox="0 0 18 18"><g opacity="1.0"><rect x="1.5" y="4.5" width="15" height="11" rx="1.5" fill="#e8e8e8" stroke="#222" stroke-width="1.2"/><rect x="3" y="2" width="4" height="3" fill="#e8e8e8" stroke="#222" stroke-width="1"/><circle cx="9.5" cy="10" r="3.9" fill="#1e1e1e"/><circle cx="9.5" cy="10" r="2.8" fill="#e8b8c4"/><circle cx="9.5" cy="10" r="2" fill="#4a2030"/></g></svg>
<div class="a " style="left:1898.2px;top:123.3px;width:15.5px;height:140px;border-radius:8px;background:#6e6e6e;border:1px solid #666"></div>
<div class="a " style="left:1899.5px;top:128px;width:13px;height:19px;border-radius:7px;background:linear-gradient(90deg,#a8a8a8,#909090);border:1px solid #6a6a6a"></div>
<svg class="a" style="left:1513px;top:250px;" width="18" height="20" viewBox="0 0 18 20"><path d="M0 4 L16 20 M0 9 L11 20 M0 14 L6 20" stroke="#999" stroke-width="1.1"/></svg>
</div></div>
<div style="position:absolute;left:1513px;top:271px;width:407px;height:869px;overflow:hidden"><div style="position:absolute;left:-1513px;top:-271px;width:1920px;height:1200px">
<div class="a " style="left:1525.9px;top:275.7px;width:41.5px;height:25.7px;border:1px solid #262626;border-radius:5px;background:linear-gradient(#555,#3c3c3c)"></div>
<svg class="a" style="left:1530px;top:279px;" width="22" height="20" viewBox="0 0 22 20"><rect x="1" y="2" width="15" height="6" rx="3" fill="#f4f4f4"/><rect x="2.5" y="3.5" width="7" height="3" rx="1.5" fill="#444"/><rect x="1" y="11" width="15" height="6" rx="3" fill="#f4f4f4"/><path d="M4 14 L6 12.5 L6 15.5Z M13 14 L11 12.5 L11 15.5Z" fill="#444"/><rect x="6.5" y="12.8" width="4" height="2.4" fill="#aaa"/></svg>
<svg class="a" style="left:1555px;top:281px;" width="8" height="16" viewBox="0 0 8 16"><path d="M4 1 L7.5 6.5 L0.5 6.5Z M0.5 9.5 L7.5 9.5 L4 15Z" fill="#d0d0d0"/></svg>
<div class="a " style="left:1579.5px;top:275.7px;width:318.70000000000005px;height:25.7px;border:1px solid #262626;border-radius:6px;background:linear-gradient(#555,#3c3c3c)"></div>
<div class="a " style="left:1845px;top:275.7px;width:26.3px;height:25.7px;background:linear-gradient(#6a94d8,#4f7ac0);border:1px solid #1e2e50"></div>
<div class="a " style="left:1605.5583333333334px;top:276.5px;width:1.2px;height:24px;background:#1e1e1e"></div>
<div class="a " style="left:1632.1166666666668px;top:276.5px;width:1.2px;height:24px;background:#1e1e1e"></div>
<div class="a " style="left:1658.675px;top:276.5px;width:1.2px;height:24px;background:#1e1e1e"></div>
<div class="a " style="left:1685.2333333333333px;top:276.5px;width:1.2px;height:24px;background:#1e1e1e"></div>
<div class="a " style="left:1711.7916666666667px;top:276.5px;width:1.2px;height:24px;background:#1e1e1e"></div>
<div class="a " style="left:1738.35px;top:276.5px;width:1.2px;height:24px;background:#1e1e1e"></div>
<div class="a " style="left:1764.9083333333333px;top:276.5px;width:1.2px;height:24px;background:#1e1e1e"></div>
<div class="a " style="left:1791.4666666666667px;top:276.5px;width:1.2px;height:24px;background:#1e1e1e"></div>
<div class="a " style="left:1818.025px;top:276.5px;width:1.2px;height:24px;background:#1e1e1e"></div>
<div class="a " style="left:1844.5833333333335px;top:276.5px;width:1.2px;height:24px;background:#1e1e1e"></div>
<div class="a " style="left:1871.1416666666667px;top:276.5px;width:1.2px;height:24px;background:#1e1e1e"></div>
<svg class="a" style="left:1582.7791666666667px;top:278.5px;" width="20" height="20" viewBox="0 0 20 20"><rect x="2" y="6" width="16" height="11" rx="1.5" fill="#5a5a5a" stroke="#9a9a9a" stroke-width="1"/><circle cx="11" cy="11.5" r="3.8" fill="#333" stroke="#9a9a9a" stroke-width="1"/><rect x="3" y="3.5" width="4" height="2.5" fill="#999"/></svg>
<svg class="a" style="left:1609.3375px;top:278.5px;" width="20" height="20" viewBox="0 0 20 20"><rect x="6" y="6" width="12" height="12" fill="#b8b4a8" stroke="#666" stroke-width="0.8"/><rect x="2" y="2" width="12" height="12" fill="#9aa8b8" stroke="#777" stroke-width="0.8"/><circle cx="7" cy="10" r="2" fill="#ddd"/><rect x="8" y="4" width="3" height="6" fill="#3a5aa0"/></svg>
<svg class="a" style="left:1635.8958333333335px;top:278.5px;" width="20" height="20" viewBox="0 0 20 20"><circle cx="5" cy="4" r="2.8" fill="#c8d060" opacity="0.5"/><rect x="10" y="3" width="6" height="11" rx="3" fill="#6a8ac8"/><circle cx="8" cy="14" r="4.3" fill="#bbb"/></svg>
<svg class="a" style="left:1662.4541666666667px;top:278.5px;" width="20" height="20" viewBox="0 0 20 20"><circle cx="10" cy="10" r="7.5" fill="#4a78b8" stroke="#333" stroke-width="0.8"/><path d="M5 7 C7 5 9 8 8 10 C7 13 9 14 10 16 C6 15 4 11 5 7Z M12 4 C15 5 17 9 15 11 C13 10 12 7 12 4Z" fill="#6a9a5a"/></svg>
<svg class="a" style="left:1689.0125px;top:278.5px;" width="20" height="20" viewBox="0 0 20 20"><path d="M10 2 L17.5 5.5 L17.5 14 L10 18 L2.5 14 L2.5 5.5Z" fill="#3a2a18"/><path d="M10 3.2 L16.2 6 L10 8.8 L3.8 6Z" fill="#e8c090"/><path d="M3.8 6 L10 8.8 L10 16.6 L3.8 13.4Z" fill="#c08850"/><path d="M16.2 6 L10 8.8 L10 16.6 L16.2 13.4Z" fill="#a06a38"/></svg>
<svg class="a" style="left:1715.5708333333334px;top:278.5px;" width="20" height="20" viewBox="0 0 20 20"><path d="M4 12 C1 9 5 5 8 8 M8 8 L12 12 M12 12 C15 15 19 11 16 8 M7 14 C4 17 1 13 4 11 M16 8 C13 5 9 9 11 11" fill="none" stroke="#cfcfcf" stroke-width="2.2"/></svg>
<svg class="a" style="left:1742.1291666666666px;top:278.5px;" width="20" height="20" viewBox="0 0 20 20"><path d="M3 17 L11 9" stroke="#2a3a60" stroke-width="3.8" stroke-linecap="round"/><path d="M3 17 L11 9" stroke="#7a9ad8" stroke-width="2.2" stroke-linecap="round"/><path d="M10 6 C10 3 12.5 1.5 15 2.5 L13 5 L15 7 L17.2 5 C18 7.5 16.5 10 14 10 C12 10 10 8.5 10 6Z" fill="#7a9ad8"/></svg>
<svg class="a" style="left:1768.6875px;top:278.5px;" width="20" height="20" viewBox="0 0 20 20"><path d="M3.5 4 L16.5 4 L10 16Z" fill="none" stroke="#bbb" stroke-width="1.1"/><circle cx="3.5" cy="4" r="1.8" fill="#ddd" stroke="#444" stroke-width="0.6"/><circle cx="16.5" cy="4" r="1.8" fill="#ddd" stroke="#444" stroke-width="0.6"/><circle cx="10" cy="16" r="1.8" fill="#ddd" stroke="#444" stroke-width="0.6"/></svg>
<svg class="a" style="left:1795.2458333333334px;top:278.5px;" width="20" height="20" viewBox="0 0 20 20"><defs><radialGradient id="mat" cx="0.35" cy="0.3" r="0.9"><stop offset="0" stop-color="#c8c8c8"/><stop offset="0.6" stop-color="#7a6058"/><stop offset="1" stop-color="#3a3030"/></radialGradient></defs><circle cx="10" cy="10" r="7.5" fill="url(#mat)"/></svg>
<svg class="a" style="left:1821.8041666666668px;top:278.5px;" width="20" height="20" viewBox="0 0 20 20"><rect x="2.5" y="2.5" width="15" height="15" fill="#c8c0c0" stroke="#333" stroke-width="0.8"/><rect x="4" y="4" width="3.2" height="3.2" fill="#6a1a1a"/><rect x="10.4" y="4" width="3.2" height="3.2" fill="#6a1a1a"/><rect x="7.2" y="7.2" width="3.2" height="3.2" fill="#6a1a1a"/><rect x="13.6" y="7.2" width="3.2" height="3.2" fill="#6a1a1a"/><rect x="4" y="10.4" width="3.2" height="3.2" fill="#6a1a1a"/><rect x="10.4" y="10.4" width="3.2" height="3.2" fill="#6a1a1a"/><rect x="7.2" y="13.6" width="3.2" height="3.2" fill="#6a1a1a"/></svg>
<svg class="a" style="left:1848.3625000000002px;top:278.5px;" width="20" height="20" viewBox="0 0 20 20"><path d="M6 1 L7 5 L11 6 L7 7 L6 11 L5 7 L1 6 L5 5Z M14 2 L15 5.5 L18.5 6.5 L15 7.5 L14 11 L13 7.5 L9.5 6.5 L13 5.5Z M8 9 L9.2 13 L13 14 L9.2 15 L8 19 L6.8 15 L3 14 L6.8 13Z M15 12 L15.8 14.5 L18.5 15.3 L15.8 16 L15 18.5 L14.2 16 L11.5 15.3 L14.2 14.5Z" fill="#fffbe0"/></svg>
<svg class="a" style="left:1874.9208333333333px;top:278.5px;" width="20" height="20" viewBox="0 0 20 20"><path d="M3 9 L9 16 L15 8" fill="none" stroke="#4a6a9a" stroke-width="3"/><circle cx="15" cy="6" r="3.6" fill="#c8c8c8"/></svg>
<svg class="a" style="left:1900px;top:271px;" width="20" height="18" viewBox="0 0 20 18"><path d="M4 0 L20 15 M9 0 L20 10 M14 0 L20 5" stroke="#8a8a8a" stroke-width="1.2"/></svg>
<svg class="a" style="left:1527px;top:317px;" width="22" height="22" viewBox="0 0 22 22"><path d="M2 20 L9 13" stroke="#555" stroke-width="2.6"/><path d="M2 20 L9 13" stroke="#eee" stroke-width="1.2"/><path d="M7 10 L12 15 L15 12 L13 10 L17 6 L19 7 L15 3 L16 5 L12 9 L10 7Z" fill="#e8e8e8" stroke="#555" stroke-width="1"/></svg>
<svg class="a" style="left:1554px;top:317px;" width="22" height="22" viewBox="0 0 22 22"><circle cx="4.5" cy="3.5" r="3" fill="#d8e070" opacity="0.55"/><rect x="10" y="3" width="7" height="13" rx="3.2" fill="#5a88d0"/><circle cx="7.5" cy="14.5" r="4.8" fill="#d8d8d8" stroke="#444" stroke-width="0.6"/></svg>
<svg class="a" style="left:1584px;top:324.5px;" width="7" height="10" viewBox="0 0 7 10"><path d="M0.5 0.5 L6 5 L0.5 9.5Z" fill="#333"/></svg>
<svg class="a" style="left:1609.5px;top:320px;" width="18" height="18" viewBox="0 0 18 18"><g transform="scale(1.000)"><path d="M9 1 L16.5 4.8 L16.5 13.2 L9 17 L1.5 13.2 L1.5 4.8Z" fill="#3a2a18"/><path d="M9 2.4 L15.2 5.5 L9 8.6 L2.8 5.5Z" fill="#f6d6a8"/><path d="M2.8 5.5 L9 8.6 L9 15.6 L2.8 12.5Z" fill="#e79a3c"/><path d="M15.2 5.5 L9 8.6 L9 15.6 L15.2 12.5Z" fill="#c8772a"/></g></svg>
<div class="t" style="left:1636.3px;top:323.10px;font-size:15px;line-height:15px;color:#111;">shoe_test</div>
<svg class="a" style="left:1726px;top:324.5px;" width="7" height="10" viewBox="0 0 7 10"><path d="M0.5 0.5 L6 5 L0.5 9.5Z" fill="#333"/></svg>
<div class="a " style="left:1525px;top:364.4px;width:347px;height:51.9px;border:1px solid #3c3c3c;border-radius:6px;background:linear-gradient(#7c7c7c,#808080)"></div>
<svg class="a" style="left:1537.5px;top:397px;" width="13" height="13" viewBox="0 0 13 13"><circle cx="6.5" cy="6.5" r="5.5" fill="none" stroke="#aaa" stroke-width="1.2"/><path d="M6.5 3.5 L6.5 9.5 M3.5 6.5 L9.5 6.5" stroke="#999" stroke-width="1.3"/><circle cx="6.5" cy="6.5" r="4.6" fill="none" stroke="#666" stroke-width="0.6"/></svg>
<div class="a " style="left:1701px;top:400.6px;width:19.6px;height:1.6px;background:#cfcfcf"></div>
<div class="a " style="left:1701px;top:405.8px;width:19.6px;height:1.6px;background:#cfcfcf"></div>
<div class="a " style="left:1883px;top:364.4px;width:25.75px;height:25.3px;border:1px solid #333;border-radius:6px 6px 0 0;background:linear-gradient(#a4a4a4,#909090)"></div>
<div class="a " style="left:1883px;top:389.4px;width:25.75px;height:27px;border:1px solid #333;border-top:none;background:linear-gradient(#a0a0a0,#8e8e8e)"></div>
<div class="a " style="left:1883px;top:416.25px;width:25.75px;height:26.75px;border:1px solid #262626;border-radius:0 0 6px 6px;background:linear-gradient(#555,#3c3c3c)"></div>
<svg class="a" style="left:1887px;top:368.5px;" width="18" height="18" viewBox="0 0 18 18"><path d="M9 2 L9 16 M2 9 L16 9" stroke="#333" stroke-width="4.6"/><path d="M9 3 L9 15 M3 9 L15 9" stroke="#f4f4f4" stroke-width="2.6"/></svg>
<svg class="a" style="left:1887px;top:397.5px;" width="18" height="10" viewBox="0 0 18 10"><path d="M2 5 L16 5" stroke="#333" stroke-width="4.6"/><path d="M3 5 L15 5" stroke="#f4f4f4" stroke-width="2.6"/></svg>
<svg class="a" style="left:1888px;top:423px;" width="16" height="15" viewBox="0 0 16 15"><path d="M1 1 L12 1 L6.5 11Z" fill="#111"/><path d="M13 2 L9 13" stroke="#ddd" stroke-width="1.6"/></svg>
<div class="a " style="left:1525px;top:451.25px;width:383.75px;height:25.65px;border:1px solid #333;border-radius:6px;background:linear-gradient(#a8a8a8,#8e8e8e)"></div>
<svg class="a" style="left:1531.5px;top:455px;" width="18" height="18" viewBox="0 0 18 18"><path d="M9 2 L9 16 M2 9 L16 9" stroke="#444" stroke-width="4.2"/><path d="M9 3 L9 15 M3 9 L15 9" stroke="#f8f8f8" stroke-width="2.4"/></svg>
<div class="t" style="left:1712.5px;top:457.90px;font-size:15px;line-height:15px;color:#111;">New</div>
</div></div>
<div class="a " style="left:0px;top:0px;width:1920px;height:59.4px;background:#000"></div>
<div class="a " style="left:0px;top:1140px;width:1920px;height:60px;background:#000"></div>
<div class="a " style="left:1918px;top:82px;width:2px;height:1058px;background:#606060"></div>
<svg class="a" style="left:0px;top:80px;" width="130" height="80" viewBox="0 0 130 80"><g fill="none" stroke="#fff" stroke-width="4" stroke-linejoin="miter">
<path d="M15.5 10 L41.5 10 A16.5 16.5 0 0 1 41.5 43 L37.5 43 L55 68.5"/>
<path d="M68 10 L95 10 A16.5 16.5 0 0 1 95 43 L91 43 L108.5 68.5"/>
</g></svg>
<div class="t" style="left:192.5px;top:1004.4px;font-size:44px;line-height:44px;color:#fff;text-shadow:0 0 3px rgba(0,0,0,0.5)">3D MESH</div>
<svg class="a" style="left:1618px;top:462px;" width="24" height="30" viewBox="0 0 24 30"><path d="M4 2 L4 21 L8.6 16.8 L12 24.5 L15.5 23 L12.2 15.5 L18.5 15.3Z" fill="#111" stroke="#fff" stroke-width="1.6" stroke-linejoin="round"/></svg></div></body></html>
